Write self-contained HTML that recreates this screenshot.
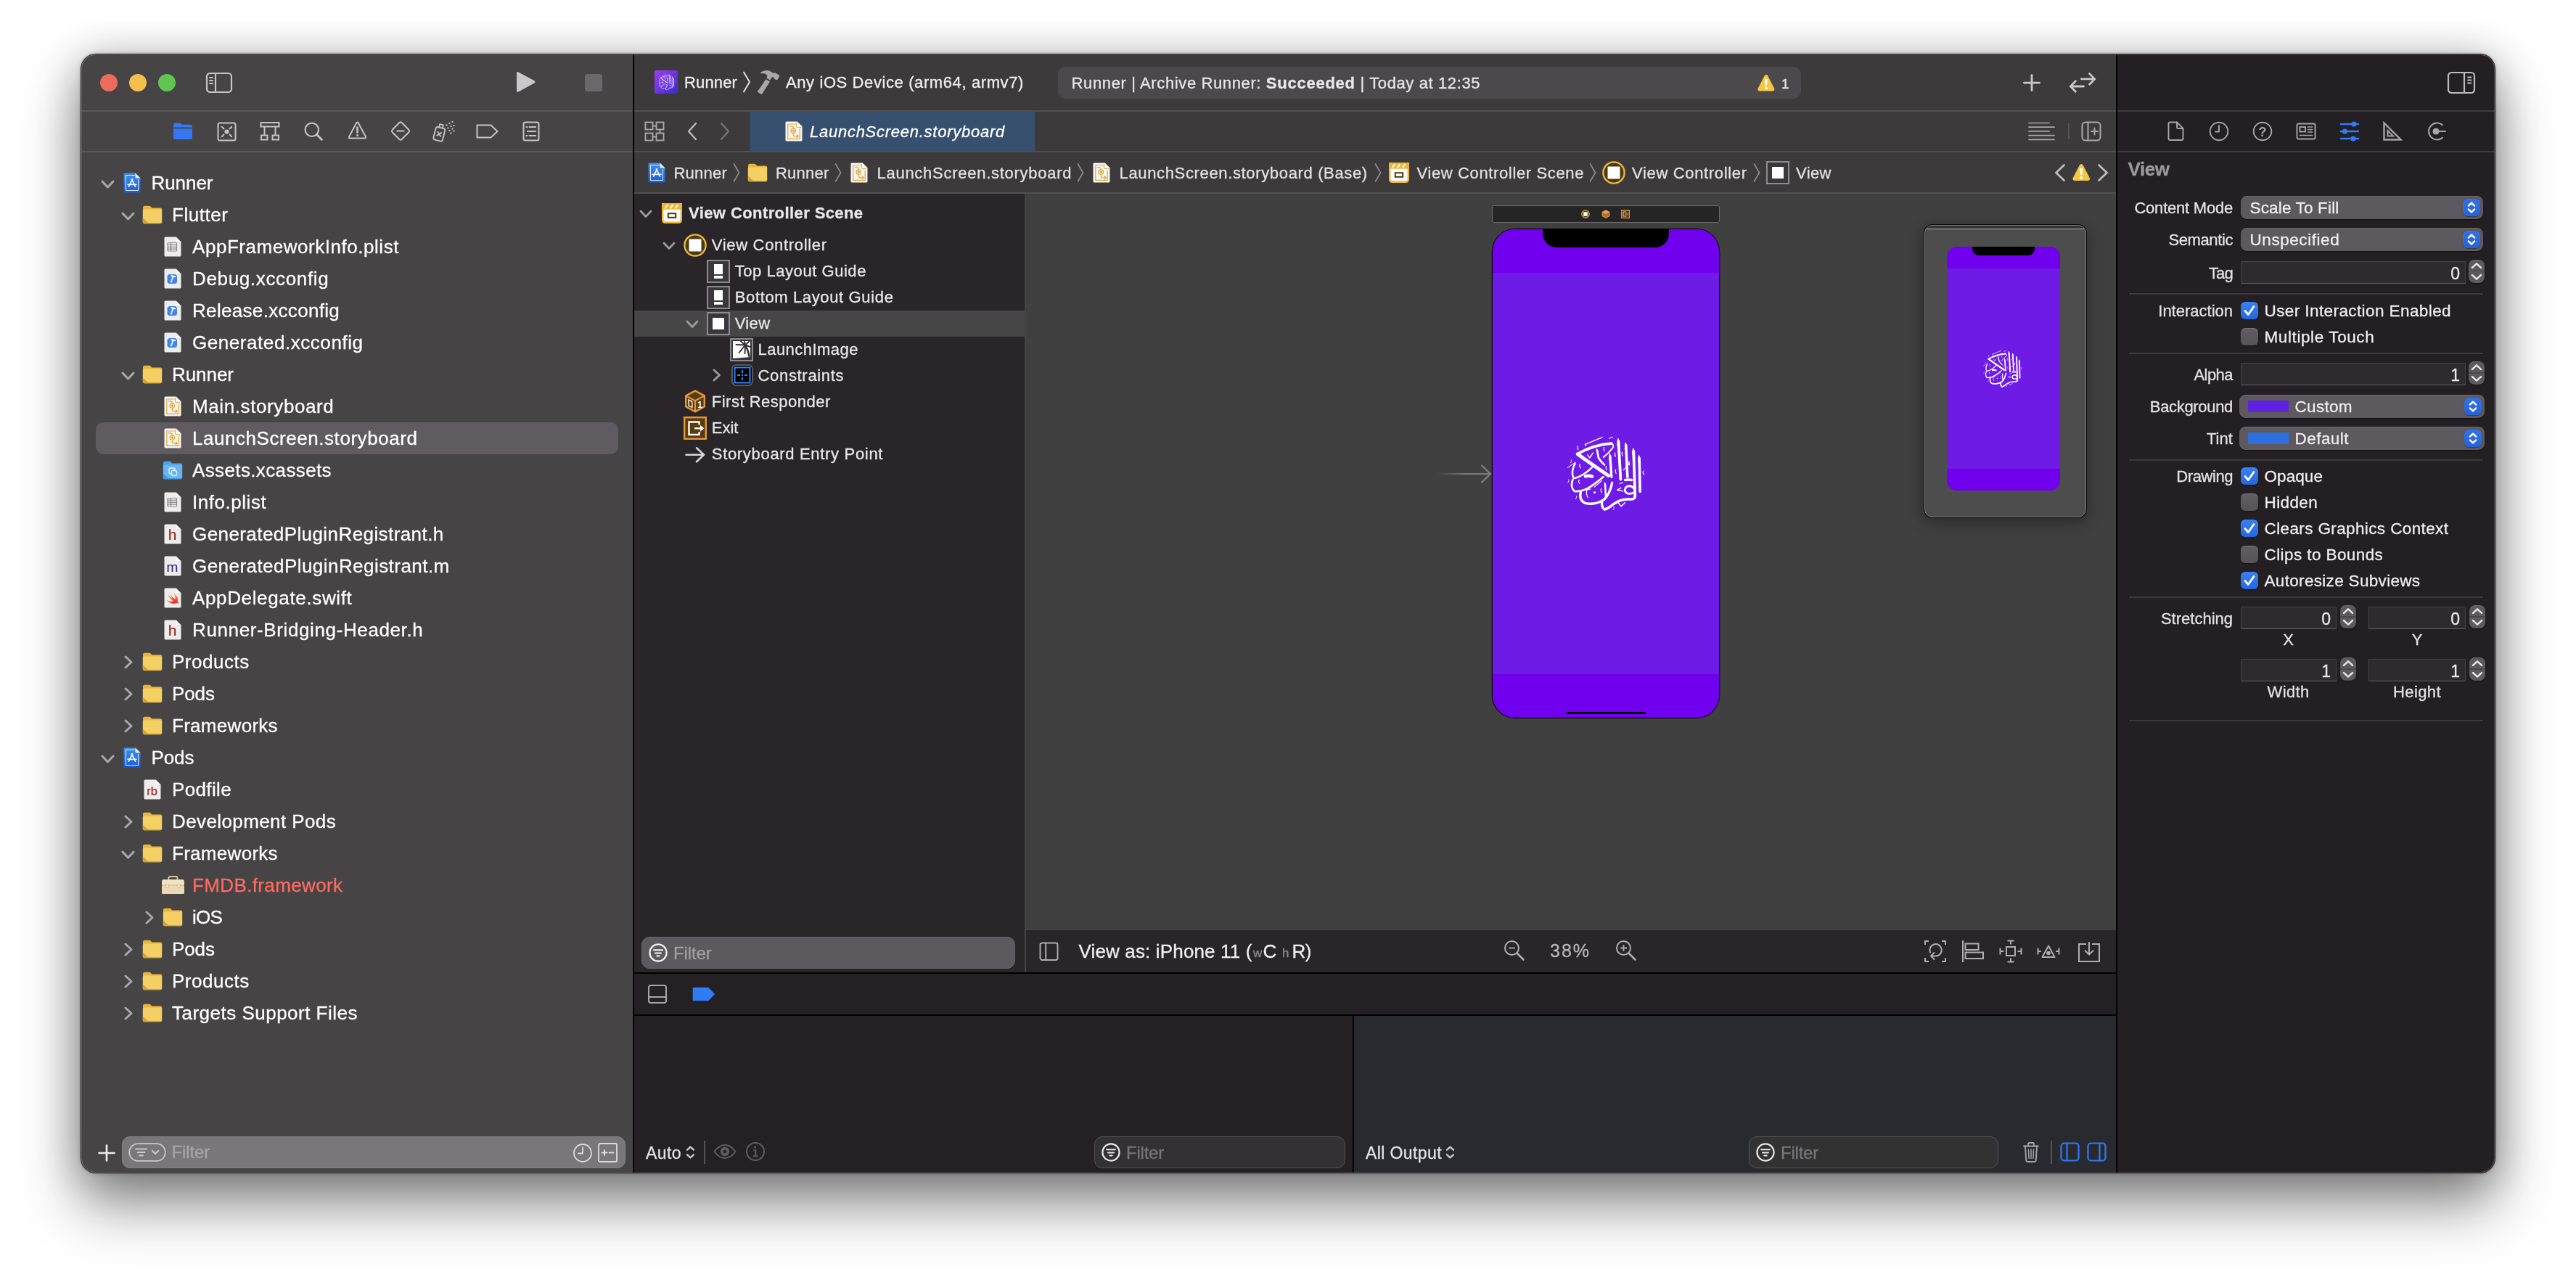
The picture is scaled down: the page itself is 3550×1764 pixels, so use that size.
<!DOCTYPE html><html><head><meta charset="utf-8"><title>Xcode</title><style>
html,body{margin:0;padding:0;}
body{width:3550px;height:1764px;background:#fff;overflow:hidden;position:relative;font-family:"Liberation Sans",sans-serif;}
div,svg{position:absolute;box-sizing:border-box;}
.t{white-space:nowrap;-webkit-text-stroke:0.3px currentColor;}
#shadow{left:112px;top:75px;width:3326px;height:1541px;border-radius:20px;
 box-shadow:0 0 0 1px rgba(0,0,0,.85),0 0 5px 1px rgba(0,0,0,.25),0 44px 80px 2px rgba(0,0,0,.44),0 4px 56px 4px rgba(0,0,0,.22);}
#clip{left:112px;top:75px;width:3326px;height:1541px;border-radius:20px;overflow:hidden;background:#3d3a3b;}
#rim{left:112px;top:75px;width:3326px;height:1541px;border-radius:20px;border:1.5px solid rgba(255,255,255,.2);}
#page{left:-112px;top:-75px;width:3550px;height:1764px;will-change:transform;}
</style></head><body><div id="shadow"></div><div id="clip"><div id="page"><div style="left:112px;top:75px;width:761px;height:1541px;background:#464444;"></div>
<div style="left:872px;top:75px;width:2px;height:1541px;background:#000;"></div>
<div style="left:871px;top:75px;width:1px;height:1541px;background:#4c4a4b;"></div>
<div style="left:874px;top:75px;width:2042px;height:192px;background:#3d3a3b;"></div>
<div style="left:2916px;top:75px;width:2px;height:1541px;background:#000;"></div>
<div style="left:2918px;top:75px;width:520px;height:1541px;background:#231f22;"></div>
<div style="left:112px;top:152px;width:760px;height:2px;background:#5a575a;"></div>
<div style="left:112px;top:208px;width:760px;height:2px;background:#5a575a;"></div>
<div style="left:874px;top:152px;width:2042px;height:2px;background:#524f52;"></div>
<div style="left:874px;top:208px;width:2042px;height:2px;background:#524f52;"></div>
<div style="left:874px;top:265px;width:2042px;height:2px;background:#524f52;"></div>
<div style="left:2918px;top:152px;width:520px;height:2px;background:#3f3c3f;"></div>
<div style="left:2918px;top:208px;width:520px;height:2px;background:#3f3c3f;"></div>
<svg style="left:138.5px;top:247.6px;" width="19" height="12" viewBox="0 0 19 12"><path d="M2 2 L9.5 10 L17 2" fill="none" stroke="#aaa8aa" stroke-width="3" stroke-linecap="round" stroke-linejoin="round"/></svg>
<svg style="left:170px;top:238px;" width="24" height="28" viewBox="0 0 24 28"><defs><linearGradient id="pg170238" x1="0" y1="0" x2="0" y2="1"><stop offset="0" stop-color="#3f93e3"/><stop offset="1" stop-color="#1c5bd8"/></linearGradient></defs><path d="M2 0.5 H16.5 L23.5 7.5 V26 Q23.5 27.5 22 27.5 H2 Q0.5 27.5 0.5 26 V2 Q0.5 0.5 2 0.5Z" fill="url(#pg170238)"/><path d="M16.5 0.5 L23.5 7.5 H18 Q16.5 7.5 16.5 6Z" fill="#e9f1fb"/><path d="M3.5 3.5 H16 M20.5 9 V24.5 H3.5 V3.5" fill="none" stroke="#dbe8fa" stroke-width="1"/><g fill="none" stroke="#eef4fd" stroke-width="1.7" stroke-linecap="round"><path d="M12.5 9 L7.5 19"/><path d="M11.5 9 L16.5 19"/><path d="M6 16.3 H18"/></g></svg>
<div class="t" style="left:208.5px;top:234.1px;font-size:26px;line-height:36px;color:#fff;letter-spacing:-0.06px;">Runner</div>
<svg style="left:166.5px;top:291.6px;" width="19" height="12" viewBox="0 0 19 12"><path d="M2 2 L9.5 10 L17 2" fill="none" stroke="#aaa8aa" stroke-width="3" stroke-linecap="round" stroke-linejoin="round"/></svg>
<svg style="left:196px;top:283px;" width="28" height="26" viewBox="0 0 28 26"><path d="M1 3 Q1 0.8 3.2 0.8 H9.5 Q11 0.8 12 2 L13.2 3.4 H25 Q27.2 3.4 27.2 5.6 V8 H1Z" fill="#e8b63d"/><path d="M0.8 7 Q0.8 5.4 2.6 5.4 H25.4 Q27.2 5.4 27.2 7 V23 Q27.2 25.2 25 25.2 H3 Q0.8 25.2 0.8 23Z" fill="#f4cf63"/><path d="M0.8 17.5 L8 24 H3 Q0.8 24 0.8 22Z" fill="#d3a235"/><path d="M0.8 23 Q0.8 25.2 3 25.2 H25 Q27.2 25.2 27.2 23 V22 Q27.2 24 25 24 H3 Q0.8 24 0.8 22Z" fill="#d3a235"/></svg>
<div class="t" style="left:237px;top:278.1px;font-size:26px;line-height:36px;color:#fff;letter-spacing:0.55px;">Flutter</div>
<svg style="left:226px;top:326px;" width="24" height="28" viewBox="0 0 24 28"><path d="M2 0.5 H16.5 L23.5 7.5 V26 Q23.5 27.5 22 27.5 H2 Q0.5 27.5 0.5 26 V2 Q0.5 0.5 2 0.5Z" fill="#eeeded"/><path d="M16.5 0.5 L23.5 7.5 H18 Q16.5 7.5 16.5 6Z" fill="#fbfbfb"/><path d="M16.5 7.5 H23.5 V9.5 Z" fill="#d4d2d4" opacity=".7"/><g fill="none" stroke="#8d8b8d" stroke-width="1.2"><rect x="5" y="8.5" width="12.5" height="11.5" rx="1"/><path d="M5 11.4 H17.5 M5 14.3 H17.5 M5 17.2 H17.5 M9.5 8.5 V20"/></g></svg>
<div class="t" style="left:265px;top:322.1px;font-size:26px;line-height:36px;color:#fff;letter-spacing:0.54px;">AppFrameworkInfo.plist</div>
<svg style="left:226px;top:370px;" width="24" height="28" viewBox="0 0 24 28"><path d="M2 0.5 H16.5 L23.5 7.5 V26 Q23.5 27.5 22 27.5 H2 Q0.5 27.5 0.5 26 V2 Q0.5 0.5 2 0.5Z" fill="#eeeded"/><path d="M16.5 0.5 L23.5 7.5 H18 Q16.5 7.5 16.5 6Z" fill="#fbfbfb"/><path d="M16.5 7.5 H23.5 V9.5 Z" fill="#d4d2d4" opacity=".7"/><rect x="4.5" y="8" width="13.5" height="13" rx="3.5" fill="#3d86f0"/><path d="M12.6 10.6 L10 18.6" stroke="#fff" stroke-width="1.7" stroke-linecap="round"/><path d="M10.6 10.2 L15 11.2" stroke="#fff" stroke-width="2.2" stroke-linecap="round"/></svg>
<div class="t" style="left:265px;top:366.1px;font-size:26px;line-height:36px;color:#fff;letter-spacing:0.65px;">Debug.xcconfig</div>
<svg style="left:226px;top:414px;" width="24" height="28" viewBox="0 0 24 28"><path d="M2 0.5 H16.5 L23.5 7.5 V26 Q23.5 27.5 22 27.5 H2 Q0.5 27.5 0.5 26 V2 Q0.5 0.5 2 0.5Z" fill="#eeeded"/><path d="M16.5 0.5 L23.5 7.5 H18 Q16.5 7.5 16.5 6Z" fill="#fbfbfb"/><path d="M16.5 7.5 H23.5 V9.5 Z" fill="#d4d2d4" opacity=".7"/><rect x="4.5" y="8" width="13.5" height="13" rx="3.5" fill="#3d86f0"/><path d="M12.6 10.6 L10 18.6" stroke="#fff" stroke-width="1.7" stroke-linecap="round"/><path d="M10.6 10.2 L15 11.2" stroke="#fff" stroke-width="2.2" stroke-linecap="round"/></svg>
<div class="t" style="left:265px;top:410.1px;font-size:26px;line-height:36px;color:#fff;letter-spacing:0.32px;">Release.xcconfig</div>
<svg style="left:226px;top:458px;" width="24" height="28" viewBox="0 0 24 28"><path d="M2 0.5 H16.5 L23.5 7.5 V26 Q23.5 27.5 22 27.5 H2 Q0.5 27.5 0.5 26 V2 Q0.5 0.5 2 0.5Z" fill="#eeeded"/><path d="M16.5 0.5 L23.5 7.5 H18 Q16.5 7.5 16.5 6Z" fill="#fbfbfb"/><path d="M16.5 7.5 H23.5 V9.5 Z" fill="#d4d2d4" opacity=".7"/><rect x="4.5" y="8" width="13.5" height="13" rx="3.5" fill="#3d86f0"/><path d="M12.6 10.6 L10 18.6" stroke="#fff" stroke-width="1.7" stroke-linecap="round"/><path d="M10.6 10.2 L15 11.2" stroke="#fff" stroke-width="2.2" stroke-linecap="round"/></svg>
<div class="t" style="left:265px;top:454.1px;font-size:26px;line-height:36px;color:#fff;letter-spacing:0.56px;">Generated.xcconfig</div>
<svg style="left:166.5px;top:511.6px;" width="19" height="12" viewBox="0 0 19 12"><path d="M2 2 L9.5 10 L17 2" fill="none" stroke="#aaa8aa" stroke-width="3" stroke-linecap="round" stroke-linejoin="round"/></svg>
<svg style="left:196px;top:503px;" width="28" height="26" viewBox="0 0 28 26"><path d="M1 3 Q1 0.8 3.2 0.8 H9.5 Q11 0.8 12 2 L13.2 3.4 H25 Q27.2 3.4 27.2 5.6 V8 H1Z" fill="#e8b63d"/><path d="M0.8 7 Q0.8 5.4 2.6 5.4 H25.4 Q27.2 5.4 27.2 7 V23 Q27.2 25.2 25 25.2 H3 Q0.8 25.2 0.8 23Z" fill="#f4cf63"/><path d="M0.8 17.5 L8 24 H3 Q0.8 24 0.8 22Z" fill="#d3a235"/><path d="M0.8 23 Q0.8 25.2 3 25.2 H25 Q27.2 25.2 27.2 23 V22 Q27.2 24 25 24 H3 Q0.8 24 0.8 22Z" fill="#d3a235"/></svg>
<div class="t" style="left:237px;top:498.1px;font-size:26px;line-height:36px;color:#fff;letter-spacing:-0.06px;">Runner</div>
<svg style="left:226px;top:546px;" width="24" height="28" viewBox="0 0 24 28"><path d="M2 0.5 H16.5 L23.5 7.5 V26 Q23.5 27.5 22 27.5 H2 Q0.5 27.5 0.5 26 V2 Q0.5 0.5 2 0.5Z" fill="#f6f5f3"/><path d="M16.5 0.5 L23.5 7.5 H18 Q16.5 7.5 16.5 6Z" fill="#fff" /><path d="M3.8 4 H14.5 M20.2 10.5 V24.3 H3.8 V4" fill="none" stroke="#e0a93b" stroke-width="1.2"/><path d="M15.4 2 V6.8 Q15.4 8.6 17.2 8.6 H22" fill="none" stroke="#e0a93b" stroke-width="1"/><g fill="none" stroke="#e0a93b" stroke-width="1.3" stroke-linecap="round"><circle cx="11.3" cy="13" r="3.2"/><circle cx="11.3" cy="13" r="1.1" fill="#e0a93b"/><path d="M6 6.8 H8.6 Q11.3 6.8 11.3 9.6"/><path d="M11.3 16.4 V18.3 Q11.3 20.8 13.8 20.8 H18 M16.2 18.8 L18.3 20.8 L16.2 22.8"/></g></svg>
<div class="t" style="left:265px;top:542.1px;font-size:26px;line-height:36px;color:#fff;letter-spacing:0.6px;">Main.storyboard</div>
<div style="left:132px;top:582.3px;width:720px;height:44px;background:#5f5b60;border-radius:11px;"></div>
<svg style="left:226px;top:590px;" width="24" height="28" viewBox="0 0 24 28"><path d="M2 0.5 H16.5 L23.5 7.5 V26 Q23.5 27.5 22 27.5 H2 Q0.5 27.5 0.5 26 V2 Q0.5 0.5 2 0.5Z" fill="#f6f5f3"/><path d="M16.5 0.5 L23.5 7.5 H18 Q16.5 7.5 16.5 6Z" fill="#fff" /><path d="M3.8 4 H14.5 M20.2 10.5 V24.3 H3.8 V4" fill="none" stroke="#e0a93b" stroke-width="1.2"/><path d="M15.4 2 V6.8 Q15.4 8.6 17.2 8.6 H22" fill="none" stroke="#e0a93b" stroke-width="1"/><g fill="none" stroke="#e0a93b" stroke-width="1.3" stroke-linecap="round"><circle cx="11.3" cy="13" r="3.2"/><circle cx="11.3" cy="13" r="1.1" fill="#e0a93b"/><path d="M6 6.8 H8.6 Q11.3 6.8 11.3 9.6"/><path d="M11.3 16.4 V18.3 Q11.3 20.8 13.8 20.8 H18 M16.2 18.8 L18.3 20.8 L16.2 22.8"/></g></svg>
<div class="t" style="left:265px;top:586.1px;font-size:26px;line-height:36px;color:#fff;letter-spacing:0.55px;">LaunchScreen.storyboard</div>
<svg style="left:224px;top:635px;" width="28" height="26" viewBox="0 0 28 26"><path d="M1 3 Q1 0.8 3.2 0.8 H9.5 Q11 0.8 12 2 L13.2 3.4 H25 Q27.2 3.4 27.2 5.6 V8 H1Z" fill="#4aa3ea"/><path d="M0.8 7 Q0.8 5.4 2.6 5.4 H25.4 Q27.2 5.4 27.2 7 V23 Q27.2 25.2 25 25.2 H3 Q0.8 25.2 0.8 23Z" fill="#66b6f1"/><path d="M0.8 17.5 L8 24 H3 Q0.8 24 0.8 22Z" fill="#3f96e2"/><path d="M0.8 23 Q0.8 25.2 3 25.2 H25 Q27.2 25.2 27.2 23 V22 Q27.2 24 25 24 H3 Q0.8 24 0.8 22Z" fill="#3f96e2"/><g fill="none" stroke="#e6f3fd" stroke-width="1.3"><rect x="9" y="10" width="8" height="8" rx="1.5"/><rect x="12.5" y="13.5" width="7" height="7" rx="1.5" fill="#5fb4f0"/></g></svg>
<div class="t" style="left:265px;top:630.1px;font-size:26px;line-height:36px;color:#fff;letter-spacing:0.37px;">Assets.xcassets</div>
<svg style="left:226px;top:678px;" width="24" height="28" viewBox="0 0 24 28"><path d="M2 0.5 H16.5 L23.5 7.5 V26 Q23.5 27.5 22 27.5 H2 Q0.5 27.5 0.5 26 V2 Q0.5 0.5 2 0.5Z" fill="#eeeded"/><path d="M16.5 0.5 L23.5 7.5 H18 Q16.5 7.5 16.5 6Z" fill="#fbfbfb"/><path d="M16.5 7.5 H23.5 V9.5 Z" fill="#d4d2d4" opacity=".7"/><g fill="none" stroke="#8d8b8d" stroke-width="1.2"><rect x="5" y="8.5" width="12.5" height="11.5" rx="1"/><path d="M5 11.4 H17.5 M5 14.3 H17.5 M5 17.2 H17.5 M9.5 8.5 V20"/></g></svg>
<div class="t" style="left:265px;top:674.1px;font-size:26px;line-height:36px;color:#fff;letter-spacing:0.54px;">Info.plist</div>
<svg style="left:226px;top:722px;" width="24" height="28" viewBox="0 0 24 28"><path d="M2 0.5 H16.5 L23.5 7.5 V26 Q23.5 27.5 22 27.5 H2 Q0.5 27.5 0.5 26 V2 Q0.5 0.5 2 0.5Z" fill="#eeeded"/><path d="M16.5 0.5 L23.5 7.5 H18 Q16.5 7.5 16.5 6Z" fill="#fbfbfb"/><path d="M16.5 7.5 H23.5 V9.5 Z" fill="#d4d2d4" opacity=".7"/><text x="11.5" y="21.5" font-family="Liberation Sans, sans-serif" font-size="21" fill="#a3241f" stroke="#a3241f" stroke-width=".15" text-anchor="middle">h</text></svg>
<div class="t" style="left:265px;top:718.1px;font-size:26px;line-height:36px;color:#fff;letter-spacing:0.42px;">GeneratedPluginRegistrant.h</div>
<svg style="left:226px;top:766px;" width="24" height="28" viewBox="0 0 24 28"><path d="M2 0.5 H16.5 L23.5 7.5 V26 Q23.5 27.5 22 27.5 H2 Q0.5 27.5 0.5 26 V2 Q0.5 0.5 2 0.5Z" fill="#eeeded"/><path d="M16.5 0.5 L23.5 7.5 H18 Q16.5 7.5 16.5 6Z" fill="#fbfbfb"/><path d="M16.5 7.5 H23.5 V9.5 Z" fill="#d4d2d4" opacity=".7"/><text x="11.5" y="21.5" font-family="Liberation Sans, sans-serif" font-size="19" fill="#4a2a8e" stroke="#4a2a8e" stroke-width=".15" text-anchor="middle">m</text></svg>
<div class="t" style="left:265px;top:762.1px;font-size:26px;line-height:36px;color:#fff;letter-spacing:0.45px;">GeneratedPluginRegistrant.m</div>
<svg style="left:226px;top:810px;" width="24" height="28" viewBox="0 0 24 28"><path d="M2 0.5 H16.5 L23.5 7.5 V26 Q23.5 27.5 22 27.5 H2 Q0.5 27.5 0.5 26 V2 Q0.5 0.5 2 0.5Z" fill="#eeeded"/><path d="M16.5 0.5 L23.5 7.5 H18 Q16.5 7.5 16.5 6Z" fill="#fbfbfb"/><path d="M16.5 7.5 H23.5 V9.5 Z" fill="#d4d2d4" opacity=".7"/><defs><linearGradient id="sw810" x1="0" y1="0" x2="0" y2="1"><stop offset="0" stop-color="#f88a36"/><stop offset="1" stop-color="#fd2020"/></linearGradient></defs><path d="M13.5 9 C17.5 12 18.6 15.5 17.6 18 C18.6 19.2 18.7 20.6 18.5 21.4 C17.6 19.9 16.4 19.9 15.7 20.3 C13.5 21.5 9 21.2 5 16.6 C7.5 18.3 10.3 18.9 12.4 17.7 C9.5 15.4 7.3 12.5 6 10.5 C8.3 12.5 11 14.5 12.2 15.2 C10.4 13.3 8.8 11.2 8 10 C10.6 12.4 13.6 14.8 15 15.6 C15.6 13.6 14.9 11 13.5 9Z" fill="url(#sw810)" transform="translate(11.8 15.2) scale(1.18) translate(-11.8 -15.2)"/></svg>
<div class="t" style="left:265px;top:806.1px;font-size:26px;line-height:36px;color:#fff;letter-spacing:0.64px;">AppDelegate.swift</div>
<svg style="left:226px;top:854px;" width="24" height="28" viewBox="0 0 24 28"><path d="M2 0.5 H16.5 L23.5 7.5 V26 Q23.5 27.5 22 27.5 H2 Q0.5 27.5 0.5 26 V2 Q0.5 0.5 2 0.5Z" fill="#eeeded"/><path d="M16.5 0.5 L23.5 7.5 H18 Q16.5 7.5 16.5 6Z" fill="#fbfbfb"/><path d="M16.5 7.5 H23.5 V9.5 Z" fill="#d4d2d4" opacity=".7"/><text x="11.5" y="21.5" font-family="Liberation Sans, sans-serif" font-size="21" fill="#a3241f" stroke="#a3241f" stroke-width=".15" text-anchor="middle">h</text></svg>
<div class="t" style="left:265px;top:850.1px;font-size:26px;line-height:36px;color:#fff;letter-spacing:0.62px;">Runner-Bridging-Header.h</div>
<svg style="left:171.0px;top:903.1px;" width="12" height="19" viewBox="0 0 12 19"><path d="M2 2 L10 9.5 L2 17" fill="none" stroke="#aaa8aa" stroke-width="3" stroke-linecap="round" stroke-linejoin="round"/></svg>
<svg style="left:196px;top:899px;" width="28" height="26" viewBox="0 0 28 26"><path d="M1 3 Q1 0.8 3.2 0.8 H9.5 Q11 0.8 12 2 L13.2 3.4 H25 Q27.2 3.4 27.2 5.6 V8 H1Z" fill="#e8b63d"/><path d="M0.8 7 Q0.8 5.4 2.6 5.4 H25.4 Q27.2 5.4 27.2 7 V23 Q27.2 25.2 25 25.2 H3 Q0.8 25.2 0.8 23Z" fill="#f4cf63"/><path d="M0.8 17.5 L8 24 H3 Q0.8 24 0.8 22Z" fill="#d3a235"/><path d="M0.8 23 Q0.8 25.2 3 25.2 H25 Q27.2 25.2 27.2 23 V22 Q27.2 24 25 24 H3 Q0.8 24 0.8 22Z" fill="#d3a235"/></svg>
<div class="t" style="left:237px;top:894.1px;font-size:26px;line-height:36px;color:#fff;letter-spacing:0.52px;">Products</div>
<svg style="left:171.0px;top:947.1px;" width="12" height="19" viewBox="0 0 12 19"><path d="M2 2 L10 9.5 L2 17" fill="none" stroke="#aaa8aa" stroke-width="3" stroke-linecap="round" stroke-linejoin="round"/></svg>
<svg style="left:196px;top:943px;" width="28" height="26" viewBox="0 0 28 26"><path d="M1 3 Q1 0.8 3.2 0.8 H9.5 Q11 0.8 12 2 L13.2 3.4 H25 Q27.2 3.4 27.2 5.6 V8 H1Z" fill="#e8b63d"/><path d="M0.8 7 Q0.8 5.4 2.6 5.4 H25.4 Q27.2 5.4 27.2 7 V23 Q27.2 25.2 25 25.2 H3 Q0.8 25.2 0.8 23Z" fill="#f4cf63"/><path d="M0.8 17.5 L8 24 H3 Q0.8 24 0.8 22Z" fill="#d3a235"/><path d="M0.8 23 Q0.8 25.2 3 25.2 H25 Q27.2 25.2 27.2 23 V22 Q27.2 24 25 24 H3 Q0.8 24 0.8 22Z" fill="#d3a235"/></svg>
<div class="t" style="left:237px;top:938.1px;font-size:26px;line-height:36px;color:#fff;letter-spacing:-0.11px;">Pods</div>
<svg style="left:171.0px;top:991.1px;" width="12" height="19" viewBox="0 0 12 19"><path d="M2 2 L10 9.5 L2 17" fill="none" stroke="#aaa8aa" stroke-width="3" stroke-linecap="round" stroke-linejoin="round"/></svg>
<svg style="left:196px;top:987px;" width="28" height="26" viewBox="0 0 28 26"><path d="M1 3 Q1 0.8 3.2 0.8 H9.5 Q11 0.8 12 2 L13.2 3.4 H25 Q27.2 3.4 27.2 5.6 V8 H1Z" fill="#e8b63d"/><path d="M0.8 7 Q0.8 5.4 2.6 5.4 H25.4 Q27.2 5.4 27.2 7 V23 Q27.2 25.2 25 25.2 H3 Q0.8 25.2 0.8 23Z" fill="#f4cf63"/><path d="M0.8 17.5 L8 24 H3 Q0.8 24 0.8 22Z" fill="#d3a235"/><path d="M0.8 23 Q0.8 25.2 3 25.2 H25 Q27.2 25.2 27.2 23 V22 Q27.2 24 25 24 H3 Q0.8 24 0.8 22Z" fill="#d3a235"/></svg>
<div class="t" style="left:237px;top:982.1px;font-size:26px;line-height:36px;color:#fff;letter-spacing:0.29px;">Frameworks</div>
<svg style="left:138.5px;top:1039.6px;" width="19" height="12" viewBox="0 0 19 12"><path d="M2 2 L9.5 10 L17 2" fill="none" stroke="#aaa8aa" stroke-width="3" stroke-linecap="round" stroke-linejoin="round"/></svg>
<svg style="left:170px;top:1030px;" width="24" height="28" viewBox="0 0 24 28"><defs><linearGradient id="pg171030" x1="0" y1="0" x2="0" y2="1"><stop offset="0" stop-color="#3f93e3"/><stop offset="1" stop-color="#1c5bd8"/></linearGradient></defs><path d="M2 0.5 H16.5 L23.5 7.5 V26 Q23.5 27.5 22 27.5 H2 Q0.5 27.5 0.5 26 V2 Q0.5 0.5 2 0.5Z" fill="url(#pg171030)"/><path d="M16.5 0.5 L23.5 7.5 H18 Q16.5 7.5 16.5 6Z" fill="#e9f1fb"/><path d="M3.5 3.5 H16 M20.5 9 V24.5 H3.5 V3.5" fill="none" stroke="#dbe8fa" stroke-width="1"/><g fill="none" stroke="#eef4fd" stroke-width="1.7" stroke-linecap="round"><path d="M12.5 9 L7.5 19"/><path d="M11.5 9 L16.5 19"/><path d="M6 16.3 H18"/></g></svg>
<div class="t" style="left:208.5px;top:1026.1px;font-size:26px;line-height:36px;color:#fff;letter-spacing:-0.11px;">Pods</div>
<svg style="left:198px;top:1074px;" width="24" height="28" viewBox="0 0 24 28"><path d="M2 0.5 H16.5 L23.5 7.5 V26 Q23.5 27.5 22 27.5 H2 Q0.5 27.5 0.5 26 V2 Q0.5 0.5 2 0.5Z" fill="#eeeded"/><path d="M16.5 0.5 L23.5 7.5 H18 Q16.5 7.5 16.5 6Z" fill="#fbfbfb"/><path d="M16.5 7.5 H23.5 V9.5 Z" fill="#d4d2d4" opacity=".7"/><text x="11.5" y="21.5" font-family="Liberation Sans, sans-serif" font-size="16.5" fill="#a3241f" stroke="#a3241f" stroke-width=".15" text-anchor="middle">rb</text></svg>
<div class="t" style="left:237px;top:1070.1px;font-size:26px;line-height:36px;color:#fff;letter-spacing:0.35px;">Podfile</div>
<svg style="left:171.0px;top:1123.1px;" width="12" height="19" viewBox="0 0 12 19"><path d="M2 2 L10 9.5 L2 17" fill="none" stroke="#aaa8aa" stroke-width="3" stroke-linecap="round" stroke-linejoin="round"/></svg>
<svg style="left:196px;top:1119px;" width="28" height="26" viewBox="0 0 28 26"><path d="M1 3 Q1 0.8 3.2 0.8 H9.5 Q11 0.8 12 2 L13.2 3.4 H25 Q27.2 3.4 27.2 5.6 V8 H1Z" fill="#e8b63d"/><path d="M0.8 7 Q0.8 5.4 2.6 5.4 H25.4 Q27.2 5.4 27.2 7 V23 Q27.2 25.2 25 25.2 H3 Q0.8 25.2 0.8 23Z" fill="#f4cf63"/><path d="M0.8 17.5 L8 24 H3 Q0.8 24 0.8 22Z" fill="#d3a235"/><path d="M0.8 23 Q0.8 25.2 3 25.2 H25 Q27.2 25.2 27.2 23 V22 Q27.2 24 25 24 H3 Q0.8 24 0.8 22Z" fill="#d3a235"/></svg>
<div class="t" style="left:237px;top:1114.1px;font-size:26px;line-height:36px;color:#fff;letter-spacing:0.4px;">Development Pods</div>
<svg style="left:166.5px;top:1171.6px;" width="19" height="12" viewBox="0 0 19 12"><path d="M2 2 L9.5 10 L17 2" fill="none" stroke="#aaa8aa" stroke-width="3" stroke-linecap="round" stroke-linejoin="round"/></svg>
<svg style="left:196px;top:1163px;" width="28" height="26" viewBox="0 0 28 26"><path d="M1 3 Q1 0.8 3.2 0.8 H9.5 Q11 0.8 12 2 L13.2 3.4 H25 Q27.2 3.4 27.2 5.6 V8 H1Z" fill="#e8b63d"/><path d="M0.8 7 Q0.8 5.4 2.6 5.4 H25.4 Q27.2 5.4 27.2 7 V23 Q27.2 25.2 25 25.2 H3 Q0.8 25.2 0.8 23Z" fill="#f4cf63"/><path d="M0.8 17.5 L8 24 H3 Q0.8 24 0.8 22Z" fill="#d3a235"/><path d="M0.8 23 Q0.8 25.2 3 25.2 H25 Q27.2 25.2 27.2 23 V22 Q27.2 24 25 24 H3 Q0.8 24 0.8 22Z" fill="#d3a235"/></svg>
<div class="t" style="left:237px;top:1158.1px;font-size:26px;line-height:36px;color:#fff;letter-spacing:0.29px;">Frameworks</div>
<svg style="left:222px;top:1207px;" width="33" height="26" viewBox="0 0 33 26"><path d="M10.5 5 V3.2 Q10.5 1 12.7 1 H20.3 Q22.5 1 22.5 3.2 V5" fill="none" stroke="#d9c9a4" stroke-width="1.8"/><path d="M1 8 Q1 5 4 5 H29 Q32 5 32 8 V13 H1Z" fill="#f0e2c2"/><rect x="1" y="13" width="31" height="12" rx="1.5" fill="#ead9b3"/><path d="M1 13 H32" stroke="#c9b78f" stroke-width="1"/><rect x="7" y="11.5" width="3" height="4.5" rx="1" fill="#fff8e6" stroke="#bda97d" stroke-width=".7"/><rect x="23" y="11.5" width="3" height="4.5" rx="1" fill="#fff8e6" stroke="#bda97d" stroke-width=".7"/></svg>
<div class="t" style="left:265px;top:1202.1px;font-size:26px;line-height:36px;color:#ff6a63;letter-spacing:0.37px;">FMDB.framework</div>
<svg style="left:200.0px;top:1255.1px;" width="12" height="19" viewBox="0 0 12 19"><path d="M2 2 L10 9.5 L2 17" fill="none" stroke="#aaa8aa" stroke-width="3" stroke-linecap="round" stroke-linejoin="round"/></svg>
<svg style="left:224px;top:1251px;" width="28" height="26" viewBox="0 0 28 26"><path d="M1 3 Q1 0.8 3.2 0.8 H9.5 Q11 0.8 12 2 L13.2 3.4 H25 Q27.2 3.4 27.2 5.6 V8 H1Z" fill="#e8b63d"/><path d="M0.8 7 Q0.8 5.4 2.6 5.4 H25.4 Q27.2 5.4 27.2 7 V23 Q27.2 25.2 25 25.2 H3 Q0.8 25.2 0.8 23Z" fill="#f4cf63"/><path d="M0.8 17.5 L8 24 H3 Q0.8 24 0.8 22Z" fill="#d3a235"/><path d="M0.8 23 Q0.8 25.2 3 25.2 H25 Q27.2 25.2 27.2 23 V22 Q27.2 24 25 24 H3 Q0.8 24 0.8 22Z" fill="#d3a235"/></svg>
<div class="t" style="left:265px;top:1246.1px;font-size:26px;line-height:36px;color:#fff;letter-spacing:-0.75px;">iOS</div>
<svg style="left:171.0px;top:1299.1px;" width="12" height="19" viewBox="0 0 12 19"><path d="M2 2 L10 9.5 L2 17" fill="none" stroke="#aaa8aa" stroke-width="3" stroke-linecap="round" stroke-linejoin="round"/></svg>
<svg style="left:196px;top:1295px;" width="28" height="26" viewBox="0 0 28 26"><path d="M1 3 Q1 0.8 3.2 0.8 H9.5 Q11 0.8 12 2 L13.2 3.4 H25 Q27.2 3.4 27.2 5.6 V8 H1Z" fill="#e8b63d"/><path d="M0.8 7 Q0.8 5.4 2.6 5.4 H25.4 Q27.2 5.4 27.2 7 V23 Q27.2 25.2 25 25.2 H3 Q0.8 25.2 0.8 23Z" fill="#f4cf63"/><path d="M0.8 17.5 L8 24 H3 Q0.8 24 0.8 22Z" fill="#d3a235"/><path d="M0.8 23 Q0.8 25.2 3 25.2 H25 Q27.2 25.2 27.2 23 V22 Q27.2 24 25 24 H3 Q0.8 24 0.8 22Z" fill="#d3a235"/></svg>
<div class="t" style="left:237px;top:1290.1px;font-size:26px;line-height:36px;color:#fff;letter-spacing:-0.11px;">Pods</div>
<svg style="left:171.0px;top:1343.1px;" width="12" height="19" viewBox="0 0 12 19"><path d="M2 2 L10 9.5 L2 17" fill="none" stroke="#aaa8aa" stroke-width="3" stroke-linecap="round" stroke-linejoin="round"/></svg>
<svg style="left:196px;top:1339px;" width="28" height="26" viewBox="0 0 28 26"><path d="M1 3 Q1 0.8 3.2 0.8 H9.5 Q11 0.8 12 2 L13.2 3.4 H25 Q27.2 3.4 27.2 5.6 V8 H1Z" fill="#e8b63d"/><path d="M0.8 7 Q0.8 5.4 2.6 5.4 H25.4 Q27.2 5.4 27.2 7 V23 Q27.2 25.2 25 25.2 H3 Q0.8 25.2 0.8 23Z" fill="#f4cf63"/><path d="M0.8 17.5 L8 24 H3 Q0.8 24 0.8 22Z" fill="#d3a235"/><path d="M0.8 23 Q0.8 25.2 3 25.2 H25 Q27.2 25.2 27.2 23 V22 Q27.2 24 25 24 H3 Q0.8 24 0.8 22Z" fill="#d3a235"/></svg>
<div class="t" style="left:237px;top:1334.1px;font-size:26px;line-height:36px;color:#fff;letter-spacing:0.52px;">Products</div>
<svg style="left:171.0px;top:1387.1px;" width="12" height="19" viewBox="0 0 12 19"><path d="M2 2 L10 9.5 L2 17" fill="none" stroke="#aaa8aa" stroke-width="3" stroke-linecap="round" stroke-linejoin="round"/></svg>
<svg style="left:196px;top:1383px;" width="28" height="26" viewBox="0 0 28 26"><path d="M1 3 Q1 0.8 3.2 0.8 H9.5 Q11 0.8 12 2 L13.2 3.4 H25 Q27.2 3.4 27.2 5.6 V8 H1Z" fill="#e8b63d"/><path d="M0.8 7 Q0.8 5.4 2.6 5.4 H25.4 Q27.2 5.4 27.2 7 V23 Q27.2 25.2 25 25.2 H3 Q0.8 25.2 0.8 23Z" fill="#f4cf63"/><path d="M0.8 17.5 L8 24 H3 Q0.8 24 0.8 22Z" fill="#d3a235"/><path d="M0.8 23 Q0.8 25.2 3 25.2 H25 Q27.2 25.2 27.2 23 V22 Q27.2 24 25 24 H3 Q0.8 24 0.8 22Z" fill="#d3a235"/></svg>
<div class="t" style="left:237px;top:1378.1px;font-size:26px;line-height:36px;color:#fff;letter-spacing:0.49px;">Targets Support Files</div>
<svg style="left:134px;top:1576px;" width="26" height="26" viewBox="0 0 26 26"><path d="M13 2.5 V23.5 M2.5 13 H23.5" stroke="#eceaec" stroke-width="2.7" stroke-linecap="round"/></svg>
<div style="left:168px;top:1566px;width:694px;height:44px;background:#7a777a;border-radius:11px;border:1px solid #838083;"></div>
<svg style="left:177px;top:1575px;" width="52" height="26" viewBox="0 0 52 26"><rect x="1.2" y="1.2" width="49.6" height="23.6" rx="11.8" fill="none" stroke="#c9c7c9" stroke-width="1.8"/><path d="M10 8.5 H25 M12.5 13 H22.5 M15 17.5 H20" stroke="#c9c7c9" stroke-width="1.8" stroke-linecap="round"/><path d="M33 11 L37 15 L41 11" fill="none" stroke="#c9c7c9" stroke-width="2.2" stroke-linecap="round" stroke-linejoin="round"/></svg>
<div class="t" style="left:236.5px;top:1571.0px;font-size:24px;line-height:33px;color:#a8a5a8;letter-spacing:-0.14px;">Filter</div>
<svg style="left:789px;top:1575px;" width="28" height="28" viewBox="0 0 28 28"><circle cx="14" cy="14" r="12" fill="none" stroke="#dddbdd" stroke-width="1.8"/><path d="M14 6.5 V14.5 H8" fill="none" stroke="#dddbdd" stroke-width="1.8" stroke-linecap="round" stroke-linejoin="round"/></svg>
<svg style="left:824px;top:1575px;" width="28" height="28" viewBox="0 0 28 28"><rect x="1" y="1" width="25" height="25" rx="2" fill="none" stroke="#dddbdd" stroke-width="1.8"/><path d="M5.5 13.5 H12.5 M9 10 V17 M15.5 13.5 H21.5" stroke="#dddbdd" stroke-width="1.9" stroke-linecap="round"/></svg>
<div style="left:138px;top:102px;width:24px;height:24px;border-radius:12px;background:#ed6a5e;"></div>
<div style="left:178px;top:102px;width:24px;height:24px;border-radius:12px;background:#f5bf4f;"></div>
<div style="left:218px;top:102px;width:24px;height:24px;border-radius:12px;background:#61c554;"></div>
<svg style="left:283px;top:99px;" width="38" height="30" viewBox="0 0 38 30"><g fill="none" stroke="#c6c4c6" stroke-width="2.2" stroke-linecap="round" stroke-linejoin="round" ><rect x="2" y="2" width="34" height="26" rx="4.5"/><path d="M14 2 V28"/><path d="M6 8 H10 M6 12 H10 M6 16 H10" stroke-width="1.8"/></g></svg>
<svg style="left:710px;top:97px;" width="30" height="32" viewBox="0 0 30 32"><path d="M2 4 Q2 1.2 4.6 2.4 L26.4 14.2 Q28.6 16 26.4 17.6 L4.6 29.4 Q2 30.6 2 27.8Z" fill="#cac8ca"/></svg>
<div style="left:806px;top:102px;width:24px;height:24px;background:#6b696b;border-radius:3.5px;"></div>
<svg style="left:238px;top:168px;" width="28" height="25" viewBox="0 0 28 25"><path d="M1 4 Q1 1.5 3.5 1.5 H9 Q10.5 1.5 11.5 2.6 L12.6 3.8 H24.5 Q27 3.8 27 6.3 V7.5 H1Z" fill="#3478f6"/><path d="M1 9.3 H27 V21.5 Q27 24 24.5 24 H3.5 Q1 24 1 21.5Z" fill="#3478f6"/></svg>
<svg style="left:298.5px;top:167.5px;" width="27" height="27" viewBox="0 0 27 27"><g fill="none" stroke="#c6c4c6" stroke-width="2" stroke-linecap="round" stroke-linejoin="round" ><rect x="1.5" y="1.5" width="24" height="24" rx="2.5" transform="scale(1)"/><path d="M6.8 6.8 L9.5 9.5 M20.2 6.8 L17.5 9.5 M6.8 20.2 L9.5 17.5 M20.2 20.2 L17.5 17.5"/><circle cx="13.5" cy="13.5" r="3.1" fill="#c6c4c6" stroke="none"/></g></svg>
<svg style="left:358px;top:167px;" width="28" height="28" viewBox="0 0 28 28"><g fill="none" stroke="#c6c4c6" stroke-width="2" stroke-linecap="round"  stroke-linejoin="miter"><rect x="1.5" y="2" width="25" height="5.5" /><path d="M6.5 7.5 V19 M21.5 7.5 V19"/><rect x="2" y="19.5" width="8.5" height="6"/><rect x="17.5" y="19.5" width="8.5" height="6"/></g></svg>
<svg style="left:418px;top:167px;" width="30" height="30" viewBox="0 0 30 30"><g fill="none" stroke="#c6c4c6" stroke-width="2.2" stroke-linecap="round" stroke-linejoin="round" ><circle cx="11.8" cy="11.8" r="9.2"/><path d="M18.6 18.6 L25.5 25.5" stroke-width="2.8"/></g></svg>
<svg style="left:479px;top:166px;" width="27" height="28" viewBox="0 0 27 28"><g fill="none" stroke="#c6c4c6" stroke-width="2" stroke-linecap="round" stroke-linejoin="round" ><path d="M13.5 2.6 Q14.3 2.6 14.8 3.5 L25 22.5 Q25.6 24.6 23.6 24.6 H3.4 Q1.4 24.6 2 22.5 L12.2 3.5 Q12.7 2.6 13.5 2.6Z"/><path d="M13.5 9.5 V16.5" stroke-width="2.6"/><circle cx="13.5" cy="20.4" r="1.5" fill="#c6c4c6" stroke="none"/></g></svg>
<svg style="left:538px;top:166px;" width="28" height="30" viewBox="0 0 28 30"><g fill="none" stroke="#c6c4c6" stroke-width="2" stroke-linecap="round" stroke-linejoin="round" ><path d="M14 2.2 Q14.8 2.2 15.6 3 L25.3 12.8 Q26.6 14.5 25.3 16.2 L15.6 26 Q14 27.4 12.4 26 L2.7 16.2 Q1.4 14.5 2.7 12.8 L12.4 3 Q13.2 2.2 14 2.2Z"/><path d="M9.5 14.5 H18.5" stroke-width="2.2"/></g></svg>
<svg style="left:596px;top:166px;" width="33" height="31" viewBox="0 0 33 31"><g fill="none" stroke="#c6c4c6" stroke-width="1.9" stroke-linejoin="round" stroke-linecap="round" transform="rotate(14 10 18)"><rect x="3" y="10" width="13" height="18" rx="2.5"/><path d="M7 10 V5.5 H12 V10"/><path d="M7 16.5 L12 21.5 M12 16.5 L7 21.5"/></g><g fill="#c6c4c6"><rect x="18.5" y="5.5" width="2" height="2"/><rect x="22.5" y="3" width="2" height="2"/><rect x="26.5" y="1" width="2" height="2"/><rect x="24.5" y="7" width="2" height="2"/><rect x="28.5" y="6" width="2" height="2"/><rect x="20.5" y="9.5" width="2" height="2"/><rect x="26.5" y="10.5" width="2" height="2"/><rect x="22.5" y="13" width="2" height="2"/><rect x="28.5" y="13.5" width="2" height="2"/><rect x="24.5" y="16.5" width="2" height="2"/></g></svg>
<svg style="left:656px;top:171px;" width="32" height="20" viewBox="0 0 32 20"><g fill="none" stroke="#c6c4c6" stroke-width="2" stroke-linecap="round"  stroke-linejoin="miter"><path d="M1.5 1.5 H20.5 L29.5 10 L20.5 18.5 H1.5Z"/></g></svg>
<svg style="left:720px;top:167px;" width="24" height="28" viewBox="0 0 24 28"><g fill="none" stroke="#c6c4c6" stroke-width="2" stroke-linecap="round" stroke-linejoin="round" ><rect x="1.5" y="1.5" width="21" height="25" rx="2.5"/><path d="M9.5 8 H18 M9.5 14 H18 M9.5 20 H18" stroke-width="2.2"/><path d="M5.5 8 H6.5 M7 14 H8 M5.5 20 H6.5" stroke-width="2.2"/></g></svg>
<svg style="left:902px;top:97px;" width="32" height="32" viewBox="0 0 32 32"><defs><linearGradient id="ai902_97" x1="0" y1="0" x2="1" y2="1"><stop offset="0" stop-color="#9d3fec"/><stop offset="1" stop-color="#3a2bd0"/></linearGradient></defs><rect width="32" height="32" rx="2" fill="url(#ai902_97)"/></svg><svg style="left:905.5px;top:101.0px;" width="25" height="24.1" viewBox="0 0 1326 1280"><g fill="none" stroke="#efe4fc" stroke-linecap="round" stroke-linejoin="round"><path d="M338 188 L608 76" stroke-width="15.4"/><path d="M338 188 L350 210" stroke-width="15.4"/><path d="M720 92 Q750 70 770 78" stroke-width="15.4"/><path d="M218 338 Q470 190 752 172" stroke-width="43.5"/><path d="M752 172 Q800 196 770 245 Q700 335 626 390" stroke-width="21.8"/><path d="M218 340 Q440 500 705 680" stroke-width="53.8"/><path d="M526 280 L548 400 Q590 470 640 508" stroke-width="30.7"/><path d="M518 258 L536 330" stroke-width="15.4"/><path d="M62 552 L188 468" stroke-width="11.5"/><path d="M176 492 Q108 620 156 724 Q300 700 470 528" stroke-width="28.2"/><path d="M140 746 Q100 860 166 924 Q300 940 440 842 Q545 770 622 700" stroke-width="30.7"/><path d="M268 936 Q236 1064 336 1112 Q500 1150 640 1052 Q730 962 762 792" stroke-width="38.4"/><path d="M480 860 L600 760" stroke-width="11.5"/><path d="M652 812 L662 1008" stroke-width="28.2"/><path d="M644 790 L658 850" stroke-width="14.1"/><path d="M346 908 Q400 900 420 890 M362 912 Q352 980 380 1024" stroke-width="14.1"/><path d="M862 140 L896 738" stroke-width="43.5"/><path d="M856 104 L846 200" stroke-width="16.6"/><path d="M856 104 L874 170" stroke-width="17.9"/><path d="M980 200 L1004 700" stroke-width="41.0"/><path d="M974 168 L966 258" stroke-width="16.6"/><path d="M974 168 L990 230" stroke-width="17.9"/><path d="M1100 292 L1124 1008" stroke-width="43.5"/><path d="M1094 258 L1086 350" stroke-width="16.6"/><path d="M1094 258 L1110 320" stroke-width="17.9"/><path d="M1190 402 L1202 932" stroke-width="41.0"/><path d="M1184 368 L1178 458" stroke-width="16.6"/><path d="M1184 368 L1198 430" stroke-width="17.9"/><path d="M730 372 L752 700" stroke-width="38.4"/><path d="M724 338 L716 428" stroke-width="15.4"/><path d="M724 338 L740 400" stroke-width="16.6"/><path d="M940 592 L1040 482" stroke-width="12.8"/><path d="M1112 886 Q1050 810 976 866 Q940 940 1010 962 Q1070 970 1110 946" stroke-width="33.3"/><path d="M1124 1004 Q1118 1060 1040 1052 Q900 1042 780 1130 Q700 1200 642 1214 Q592 1180 602 1092" stroke-width="38.4"/><path d="M342 690 Q395 676 448 692" stroke-width="51.2"/><path d="M968 748 Q1018 736 1068 748" stroke-width="41.0"/><circle cx="487" cy="946" r="17" fill="#efe4fc" stroke="none"/><path d="M900 872 L842 906 L934 924" stroke-width="16.6"/><path d="M880 806 L930 790" stroke-width="14.1"/><path d="M376 352 L410 400 L460 322" stroke-width="16.6"/><path d="M862 1112 L906 1164 L964 1106" stroke-width="16.6"/><path d="M222 215 q-14 24 6 60 M635 235 q-14 24 6 60 M810 320 q-14 24 6 60 M922 310 q-14 24 6 60 M255 500 q-14 24 6 60 M670 530 q-14 24 6 60 M820 585 q-14 24 6 60 M1255 605 q-14 24 6 60 M242 745 q-14 24 6 60 M590 885 q-14 24 6 60 M1032 455 q-14 24 6 60" stroke-width="12.8"/><path d="M78 742 q12 18 -10 46 M200 1000 q12 18 -10 46 M790 1172 q12 18 -10 46 M120 432 q12 18 -10 46" stroke-width="10.2"/></g></svg>
<div class="t" style="left:943px;top:98.5px;font-size:22px;line-height:30px;color:#f1eff1;letter-spacing:0.14px;">Runner</div>
<svg style="left:1022px;top:97px;" width="14" height="32" viewBox="0 0 14 32"><g fill="none" stroke="#e6e4e6" stroke-width="1.9" stroke-linecap="round"  stroke-linejoin="miter"><path d="M3 2.5 L11 16 L3 29.5"/></g></svg>
<svg style="left:1042px;top:95px;" width="34" height="36" viewBox="0 0 34 36"><g fill="#a9a9a9"><path d="M13.5 14.2 L19 17.5 L8.2 34.5 Q7.6 35.2 6.8 34.8 L2.4 32 Q1.8 31.4 2.2 30.7Z"/><path d="M6.5 4.5 Q14 -0.5 21.5 4.2 L24 6 L26.2 5.2 L31.5 8.6 Q32.6 9.6 31.8 11 L29.6 14.6 Q28.6 15.6 27.4 15 L24.6 13.2 L24.3 11.5 L21.8 11.2 L19.2 15.6 L14.2 12.5 L15.6 9.2 Q12 5 6.8 6.2 Q5.8 5.4 6.5 4.5Z"/></g></svg>
<div class="t" style="left:1083px;top:98.5px;font-size:22px;line-height:30px;color:#f1eff1;letter-spacing:0.6px;">Any iOS Device (arm64, armv7)</div>
<div style="left:1458px;top:92px;width:1024px;height:44px;background:#4b494b;border-radius:11px;"></div>
<div class="t" style="left:1476.6px;top:99.5px;font-size:22px;line-height:30px;color:#e9e7e9;letter-spacing:0.62px;">Runner | Archive Runner: <b style="letter-spacing:0.75px">Succeeded</b> | Today at 12:35</div>
<svg style="left:2422.3px;top:101.8px;" width="23.8" height="24.8" viewBox="0 0 24 25"><path d="M12 1 Q13.5 1 14.3 2.5 L23.2 19.6 Q24.4 23.2 21.3 23.6 H2.7 Q-.4 23.2 .8 19.6 L9.7 2.5 Q10.5 1 12 1Z" fill="#f5c843"/><path d="M10.1 7.6 Q12 5.8 13.9 7.6 L13.1 15.6 Q12 16.5 10.9 15.6Z" fill="#fff"/><circle cx="12" cy="19.6" r="1.9" fill="#fff"/></svg>
<div class="t" style="left:2455px;top:102.6px;font-size:19px;line-height:26px;color:#e9e7e9;">1</div>
<svg style="left:2787px;top:101px;" width="26" height="26" viewBox="0 0 26 26"><g fill="none" stroke="#c9c7c9" stroke-width="2.9" stroke-linecap="round" stroke-linejoin="round" ><path d="M13 2.6 V23.6 M2.5 13.1 H23.5"/></g></svg>
<svg style="left:2850px;top:100px;" width="40" height="29" viewBox="0 0 40 29"><g fill="none" stroke="#c9c7c9" stroke-width="2.8" stroke-linecap="round"  stroke-linejoin="miter"><path d="M18.5 8.9 H35.5 M29.6 1.6 L36.6 8.9 L29.6 16.2"/><path d="M21.5 19 H4.5 M10.4 11.7 L3.4 19 L10.4 26.3"/></g></svg>
<svg style="left:888px;top:167px;" width="28" height="28" viewBox="0 0 28 28"><g fill="none" stroke="#a9a7a9" stroke-width="1.9" stroke-linecap="round"  stroke-linejoin="miter"><rect x="1.5" y="1.5" width="10" height="10"/><rect x="16.5" y="1.5" width="10" height="10"/><rect x="1.5" y="16.5" width="10" height="10"/><rect x="16.5" y="16.5" width="10" height="10"/><path d="M11.5 6.5 H16.5 M11.5 21.5 H16.5 M21.5 11.5 V16.5"/></g></svg>
<svg style="left:946px;top:168px;" width="16" height="26" viewBox="0 0 16 26"><g fill="none" stroke="#bfbdbf" stroke-width="2.3" stroke-linecap="round" stroke-linejoin="round" ><path d="M13 2 L3 13 L13 24"/></g></svg>
<svg style="left:991px;top:168px;" width="16" height="26" viewBox="0 0 16 26"><g fill="none" stroke="#767476" stroke-width="2.3" stroke-linecap="round" stroke-linejoin="round" ><path d="M3 2 L13 13 L3 24"/></g></svg>
<div style="left:1034px;top:154px;width:392px;height:54px;background:#38506f;"></div>
<svg style="left:1082px;top:167px;" width="24" height="28" viewBox="0 0 24 28"><path d="M2 0.5 H16.5 L23.5 7.5 V26 Q23.5 27.5 22 27.5 H2 Q0.5 27.5 0.5 26 V2 Q0.5 0.5 2 0.5Z" fill="#f6f5f3"/><path d="M16.5 0.5 L23.5 7.5 H18 Q16.5 7.5 16.5 6Z" fill="#fff" /><path d="M3.8 4 H14.5 M20.2 10.5 V24.3 H3.8 V4" fill="none" stroke="#e0a93b" stroke-width="1.2"/><path d="M15.4 2 V6.8 Q15.4 8.6 17.2 8.6 H22" fill="none" stroke="#e0a93b" stroke-width="1"/><g fill="none" stroke="#e0a93b" stroke-width="1.3" stroke-linecap="round"><circle cx="11.3" cy="13" r="3.2"/><circle cx="11.3" cy="13" r="1.1" fill="#e0a93b"/><path d="M6 6.8 H8.6 Q11.3 6.8 11.3 9.6"/><path d="M11.3 16.4 V18.3 Q11.3 20.8 13.8 20.8 H18 M16.2 18.8 L18.3 20.8 L16.2 22.8"/></g></svg>
<div class="t" style="left:1116px;top:166.6px;font-size:22px;line-height:30px;color:#fff;letter-spacing:0.74px;font-style:italic;">LaunchScreen.storyboard</div>
<svg style="left:2794px;top:167px;" width="40" height="28" viewBox="0 0 40 28"><g fill="none" stroke="#a9a7a9" stroke-width="1.7" stroke-linecap="round" stroke-linejoin="round" ><path d="M2 2.5 H30 M2 8.2 H37 M2 13.9 H30 M2 19.6 H37 M2 25.3 H37"/></g></svg>
<div style="left:2850px;top:170px;width:2px;height:22px;background:#555355;"></div>
<svg style="left:2868px;top:167px;" width="28" height="28" viewBox="0 0 28 28"><g fill="none" stroke="#a9a7a9" stroke-width="2" stroke-linecap="round" stroke-linejoin="round" ><rect x="1.5" y="1.5" width="25" height="25" rx="4.5"/><path d="M9.5 1.5 V26.5"/><path d="M14 14 H23 M18.5 9.5 V18.5" stroke-width="1.9"/></g></svg>
<svg style="left:893px;top:224px;" width="24" height="28" viewBox="0 0 24 28"><defs><linearGradient id="pg893224" x1="0" y1="0" x2="0" y2="1"><stop offset="0" stop-color="#3f93e3"/><stop offset="1" stop-color="#1c5bd8"/></linearGradient></defs><path d="M2 0.5 H16.5 L23.5 7.5 V26 Q23.5 27.5 22 27.5 H2 Q0.5 27.5 0.5 26 V2 Q0.5 0.5 2 0.5Z" fill="url(#pg893224)"/><path d="M16.5 0.5 L23.5 7.5 H18 Q16.5 7.5 16.5 6Z" fill="#e9f1fb"/><path d="M3.5 3.5 H16 M20.5 9 V24.5 H3.5 V3.5" fill="none" stroke="#dbe8fa" stroke-width="1"/><g fill="none" stroke="#eef4fd" stroke-width="1.7" stroke-linecap="round"><path d="M12.5 9 L7.5 19"/><path d="M11.5 9 L16.5 19"/><path d="M6 16.3 H18"/></g></svg>
<div class="t" style="left:928.5px;top:223.6px;font-size:22px;line-height:30px;color:#e3e1e3;letter-spacing:0.22px;">Runner</div>
<svg style="left:1009px;top:224px;" width="12" height="28" viewBox="0 0 12 28"><g fill="none" stroke="#8d8b8d" stroke-width="1.7" stroke-linecap="round"  stroke-linejoin="miter"><path d="M2.5 2 L9.5 14 L2.5 26"/></g></svg>
<svg style="left:1030px;top:225px;" width="28" height="26" viewBox="0 0 28 26"><path d="M1 3 Q1 0.8 3.2 0.8 H9.5 Q11 0.8 12 2 L13.2 3.4 H25 Q27.2 3.4 27.2 5.6 V8 H1Z" fill="#e8b63d"/><path d="M0.8 7 Q0.8 5.4 2.6 5.4 H25.4 Q27.2 5.4 27.2 7 V23 Q27.2 25.2 25 25.2 H3 Q0.8 25.2 0.8 23Z" fill="#f4cf63"/><path d="M0.8 17.5 L8 24 H3 Q0.8 24 0.8 22Z" fill="#d3a235"/><path d="M0.8 23 Q0.8 25.2 3 25.2 H25 Q27.2 25.2 27.2 23 V22 Q27.2 24 25 24 H3 Q0.8 24 0.8 22Z" fill="#d3a235"/></svg>
<div class="t" style="left:1069px;top:223.6px;font-size:22px;line-height:30px;color:#e3e1e3;letter-spacing:0.22px;">Runner</div>
<svg style="left:1149px;top:224px;" width="12" height="28" viewBox="0 0 12 28"><g fill="none" stroke="#8d8b8d" stroke-width="1.7" stroke-linecap="round"  stroke-linejoin="miter"><path d="M2.5 2 L9.5 14 L2.5 26"/></g></svg>
<svg style="left:1172px;top:224px;" width="24" height="28" viewBox="0 0 24 28"><path d="M2 0.5 H16.5 L23.5 7.5 V26 Q23.5 27.5 22 27.5 H2 Q0.5 27.5 0.5 26 V2 Q0.5 0.5 2 0.5Z" fill="#f6f5f3"/><path d="M16.5 0.5 L23.5 7.5 H18 Q16.5 7.5 16.5 6Z" fill="#fff" /><path d="M3.8 4 H14.5 M20.2 10.5 V24.3 H3.8 V4" fill="none" stroke="#e0a93b" stroke-width="1.2"/><path d="M15.4 2 V6.8 Q15.4 8.6 17.2 8.6 H22" fill="none" stroke="#e0a93b" stroke-width="1"/><g fill="none" stroke="#e0a93b" stroke-width="1.3" stroke-linecap="round"><circle cx="11.3" cy="13" r="3.2"/><circle cx="11.3" cy="13" r="1.1" fill="#e0a93b"/><path d="M6 6.8 H8.6 Q11.3 6.8 11.3 9.6"/><path d="M11.3 16.4 V18.3 Q11.3 20.8 13.8 20.8 H18 M16.2 18.8 L18.3 20.8 L16.2 22.8"/></g></svg>
<div class="t" style="left:1208.5px;top:223.6px;font-size:22px;line-height:30px;color:#e3e1e3;letter-spacing:0.73px;">LaunchScreen.storyboard</div>
<svg style="left:1483px;top:224px;" width="12" height="28" viewBox="0 0 12 28"><g fill="none" stroke="#8d8b8d" stroke-width="1.7" stroke-linecap="round"  stroke-linejoin="miter"><path d="M2.5 2 L9.5 14 L2.5 26"/></g></svg>
<svg style="left:1506px;top:224px;" width="24" height="28" viewBox="0 0 24 28"><path d="M2 0.5 H16.5 L23.5 7.5 V26 Q23.5 27.5 22 27.5 H2 Q0.5 27.5 0.5 26 V2 Q0.5 0.5 2 0.5Z" fill="#f6f5f3"/><path d="M16.5 0.5 L23.5 7.5 H18 Q16.5 7.5 16.5 6Z" fill="#fff" /><path d="M3.8 4 H14.5 M20.2 10.5 V24.3 H3.8 V4" fill="none" stroke="#e0a93b" stroke-width="1.2"/><path d="M15.4 2 V6.8 Q15.4 8.6 17.2 8.6 H22" fill="none" stroke="#e0a93b" stroke-width="1"/><g fill="none" stroke="#e0a93b" stroke-width="1.3" stroke-linecap="round"><circle cx="11.3" cy="13" r="3.2"/><circle cx="11.3" cy="13" r="1.1" fill="#e0a93b"/><path d="M6 6.8 H8.6 Q11.3 6.8 11.3 9.6"/><path d="M11.3 16.4 V18.3 Q11.3 20.8 13.8 20.8 H18 M16.2 18.8 L18.3 20.8 L16.2 22.8"/></g></svg>
<div class="t" style="left:1542.5px;top:223.6px;font-size:22px;line-height:30px;color:#e3e1e3;letter-spacing:0.65px;">LaunchScreen.storyboard (Base)</div>
<svg style="left:1893px;top:224px;" width="12" height="28" viewBox="0 0 12 28"><g fill="none" stroke="#8d8b8d" stroke-width="1.7" stroke-linecap="round"  stroke-linejoin="miter"><path d="M2.5 2 L9.5 14 L2.5 26"/></g></svg>
<svg style="left:1914px;top:224px;" width="28" height="28" viewBox="0 0 28 28"><path d="M1.2 7 V23 Q1.2 26.8 5 26.8 H23 Q26.8 26.8 26.8 23 V7Z" fill="#fffdf6" stroke="#eeb63a" stroke-width="2.4"/><path d="M0 0 H28 V8.5 H0Z" fill="#eeb63a"/><path d="M4.5 7 L8.5 2.2 M11.5 7 L15.5 2.2 M18.5 7 L22.5 2.2" stroke="#fff6dc" stroke-width="2.3"/><rect x="8.8" y="14.2" width="10.4" height="5.6" fill="#fff" stroke="#4a3a10" stroke-width="2"/></svg>
<div class="t" style="left:1952.5px;top:223.6px;font-size:22px;line-height:30px;color:#e3e1e3;letter-spacing:0.63px;">View Controller Scene</div>
<svg style="left:2189px;top:224px;" width="12" height="28" viewBox="0 0 12 28"><g fill="none" stroke="#8d8b8d" stroke-width="1.7" stroke-linecap="round"  stroke-linejoin="miter"><path d="M2.5 2 L9.5 14 L2.5 26"/></g></svg>
<svg style="left:2208px;top:222px;" width="32" height="32" viewBox="0 0 32 32"><circle cx="16" cy="16" r="14.6" fill="#4a3a14" stroke="#eeb63a" stroke-width="2.4"/><rect x="7.5" y="7.5" width="17" height="17" rx="1" fill="#fff"/></svg>
<div class="t" style="left:2249px;top:223.6px;font-size:22px;line-height:30px;color:#e3e1e3;letter-spacing:0.66px;">View Controller</div>
<svg style="left:2415px;top:224px;" width="12" height="28" viewBox="0 0 12 28"><g fill="none" stroke="#8d8b8d" stroke-width="1.7" stroke-linecap="round"  stroke-linejoin="miter"><path d="M2.5 2 L9.5 14 L2.5 26"/></g></svg>
<svg style="left:2434px;top:222px;" width="32" height="32" viewBox="0 0 32 32"><rect x="1" y="1" width="30" height="30" fill="#39373b" stroke="#98969b" stroke-width="1.8"/><rect x="8" y="8" width="16" height="16" fill="#fff"/></svg>
<div class="t" style="left:2475px;top:223.6px;font-size:22px;line-height:30px;color:#e3e1e3;letter-spacing:0.38px;">View</div>
<svg style="left:2830.5px;top:225px;" width="16" height="26" viewBox="0 0 16 26"><g fill="none" stroke="#bfbdbf" stroke-width="2.7" stroke-linecap="round"  stroke-linejoin="miter"><path d="M13.5 2.5 L2.5 13 L13.5 23.5"/></g></svg>
<svg style="left:2855.5px;top:225.3px;" width="24.5" height="25.5" viewBox="0 0 24 25"><path d="M12 1 Q13.5 1 14.3 2.5 L23.2 19.6 Q24.4 23.2 21.3 23.6 H2.7 Q-.4 23.2 .8 19.6 L9.7 2.5 Q10.5 1 12 1Z" fill="#f5c843"/><path d="M10.1 7.6 Q12 5.8 13.9 7.6 L13.1 15.6 Q12 16.5 10.9 15.6Z" fill="#fff"/><circle cx="12" cy="19.6" r="1.9" fill="#fff"/></svg>
<svg style="left:2889.5px;top:225px;" width="16" height="26" viewBox="0 0 16 26"><g fill="none" stroke="#bfbdbf" stroke-width="2.7" stroke-linecap="round"  stroke-linejoin="miter"><path d="M2.5 2.5 L13.5 13 L2.5 23.5"/></g></svg>
<svg style="left:3372px;top:98px;" width="40" height="32" viewBox="0 0 40 32"><g fill="none" stroke="#bdbbbd" stroke-width="2.2" stroke-linecap="round" stroke-linejoin="round" ><rect x="2" y="2" width="36" height="28" rx="4.5"/><path d="M24 2 V30"/><path d="M29 8.5 H33.5 M29 12.5 H33.5 M29 16.5 H33.5" stroke-width="1.8"/></g></svg>
<svg style="left:2987px;top:167px;" width="24" height="28" viewBox="0 0 24 28"><g fill="none" stroke="#a7a5a7" stroke-width="1.9" stroke-linecap="round" stroke-linejoin="round" ><path d="M3.5 1.5 H13 L21.5 10 V24 Q21.5 26 19.5 26 H3.5 Q1.5 26 1.5 24 V3.5 Q1.5 1.5 3.5 1.5Z"/><path d="M13 1.5 V8 Q13 10 15 10 H21.5"/></g></svg>
<svg style="left:3044px;top:167px;" width="28" height="28" viewBox="0 0 28 28"><g fill="none" stroke="#a7a5a7" stroke-width="1.9" stroke-linecap="round" stroke-linejoin="round" ><circle cx="14" cy="14" r="12.3"/><path d="M14 6 V14.5 H9"/></g></svg>
<svg style="left:3104px;top:167px;" width="28" height="28" viewBox="0 0 28 28"><circle cx="14" cy="14" r="12.3" fill="none" stroke="#a7a5a7" stroke-width="1.9"/><text x="14" y="20.5" text-anchor="middle" font-family="Liberation Sans, sans-serif" font-size="18" font-weight="700" fill="#a7a5a7">?</text></svg>
<svg style="left:3164px;top:169px;" width="28" height="24" viewBox="0 0 28 24"><g fill="none" stroke="#a7a5a7" stroke-width="1.9" stroke-linecap="round"  stroke-linejoin="miter"><rect x="1.5" y="1.5" width="25" height="21" rx="2"/><rect x="5.5" y="6" width="7.5" height="6.5"/><path d="M16.5 6 H22.5 M16.5 9.5 H22.5 M16.5 13 H22.5 M5.5 17.5 H22.5" stroke-width="1.7"/></g></svg>
<svg style="left:3224px;top:167px;" width="28" height="28" viewBox="0 0 28 28"><g stroke="#2f7cf6" stroke-width="2.6" stroke-linecap="round"><path d="M2 4 H26 M2 14 H26 M2 24 H26"/></g><g fill="#2f7cf6"><circle cx="20" cy="4" r="3.6"/><circle cx="7.5" cy="14" r="3.6"/><circle cx="19" cy="24" r="3.6"/></g></svg>
<svg style="left:3283px;top:167px;" width="28" height="28" viewBox="0 0 28 28"><g fill="none" stroke="#a7a5a7" stroke-width="2" stroke-linecap="round"  stroke-linejoin="miter"><path d="M2.5 2.5 V25.5 H25.5Z" stroke-width="2.4"/><path d="M7.5 13 V20.5 H15Z" stroke-width="2"/></g></svg>
<svg style="left:3344px;top:167px;" width="28" height="28" viewBox="0 0 28 28"><path d="M22 5.2 A11.5 11.5 0 1 0 22 22.8" fill="none" stroke="#a7a5a7" stroke-width="2" stroke-linecap="round"/><circle cx="13" cy="14" r="4.6" fill="#a7a5a7"/><path d="M17 14 H26" stroke="#a7a5a7" stroke-width="2" stroke-linecap="round"/></svg>
<div style="left:874px;top:267px;width:538px;height:1073px;background:#2a2529;"></div>
<div style="left:1412px;top:267px;width:2px;height:1073px;background:#444444;"></div>
<div style="left:1414px;top:267px;width:1502px;height:1015px;background:#404040;"></div>
<div style="left:1414px;top:1282px;width:1502px;height:58px;background:#2a2529;"></div>
<div style="left:874px;top:428px;width:538px;height:36px;background:#474647;"></div>
<div class="t" style="left:949px;top:278.6px;font-size:22px;line-height:30px;color:#e9e7e9;font-weight:700;letter-spacing:0.41px;">View Controller Scene</div>
<div class="t" style="left:980.8px;top:322.8px;font-size:22px;line-height:30px;color:#e9e7e9;letter-spacing:0.68px;">View Controller</div>
<div class="t" style="left:1012.7px;top:358.8px;font-size:22px;line-height:30px;color:#e9e7e9;letter-spacing:0.55px;">Top Layout Guide</div>
<div class="t" style="left:1012.7px;top:394.8px;font-size:22px;line-height:30px;color:#e9e7e9;letter-spacing:0.64px;">Bottom Layout Guide</div>
<div class="t" style="left:1012.7px;top:430.8px;font-size:22px;line-height:30px;color:#e9e7e9;letter-spacing:0.38px;">View</div>
<div class="t" style="left:1044.5px;top:466.8px;font-size:22px;line-height:30px;color:#e9e7e9;letter-spacing:0.46px;">LaunchImage</div>
<div class="t" style="left:1044.5px;top:502.8px;font-size:22px;line-height:30px;color:#e9e7e9;letter-spacing:0.68px;">Constraints</div>
<div class="t" style="left:980.8px;top:538.8px;font-size:22px;line-height:30px;color:#e9e7e9;letter-spacing:0.5px;">First Responder</div>
<div class="t" style="left:980.8px;top:574.8px;font-size:22px;line-height:30px;color:#e9e7e9;letter-spacing:-0.02px;">Exit</div>
<div class="t" style="left:980.8px;top:610.8px;font-size:22px;line-height:30px;color:#e9e7e9;letter-spacing:0.68px;">Storyboard Entry Point</div>
<svg style="left:881.0px;top:289.2px;" width="18" height="11.5" viewBox="0 0 18 11.5"><path d="M2 2 L9.0 9.5 L16 2" fill="none" stroke="#9d9a9e" stroke-width="2.8" stroke-linecap="round" stroke-linejoin="round"/></svg>
<svg style="left:913.0px;top:333.2px;" width="18" height="11.5" viewBox="0 0 18 11.5"><path d="M2 2 L9.0 9.5 L16 2" fill="none" stroke="#9d9a9e" stroke-width="2.8" stroke-linecap="round" stroke-linejoin="round"/></svg>
<svg style="left:945.0px;top:441.2px;" width="18" height="11.5" viewBox="0 0 18 11.5"><path d="M2 2 L9.0 9.5 L16 2" fill="none" stroke="#9d9a9e" stroke-width="2.8" stroke-linecap="round" stroke-linejoin="round"/></svg>
<svg style="left:982.2px;top:508.3px;" width="11.5" height="18" viewBox="0 0 11.5 18"><path d="M2 2 L9.5 9.0 L2 16" fill="none" stroke="#9d9a9e" stroke-width="2.8" stroke-linecap="round" stroke-linejoin="round"/></svg>
<svg style="left:912px;top:280px;" width="28" height="28" viewBox="0 0 28 28"><path d="M1.2 7 V23 Q1.2 26.8 5 26.8 H23 Q26.8 26.8 26.8 23 V7Z" fill="#fffdf6" stroke="#eeb63a" stroke-width="2.4"/><path d="M0 0 H28 V8.5 H0Z" fill="#eeb63a"/><path d="M4.5 7 L8.5 2.2 M11.5 7 L15.5 2.2 M18.5 7 L22.5 2.2" stroke="#fff6dc" stroke-width="2.3"/><rect x="8.8" y="14.2" width="10.4" height="5.6" fill="#fff" stroke="#4a3a10" stroke-width="2"/></svg>
<svg style="left:942px;top:322px;" width="32" height="32" viewBox="0 0 32 32"><circle cx="16" cy="16" r="14.6" fill="#4a3a14" stroke="#eeb63a" stroke-width="2.4"/><rect x="7.5" y="7.5" width="17" height="17" rx="1" fill="#fff"/></svg>
<svg style="left:974px;top:358px;" width="32" height="32" viewBox="0 0 32 32"><rect x="1" y="1" width="30" height="30" fill="#39373b" stroke="#98969b" stroke-width="1.8"/><rect x="10" y="6" width="12" height="14" fill="#fff"/><rect x="10" y="22" width="12" height="3.8" fill="#fff"/></svg>
<svg style="left:974px;top:394px;" width="32" height="32" viewBox="0 0 32 32"><rect x="1" y="1" width="30" height="30" fill="#39373b" stroke="#98969b" stroke-width="1.8"/><rect x="10" y="6" width="12" height="14" fill="#fff"/><rect x="10" y="22" width="12" height="3.8" fill="#fff"/></svg>
<svg style="left:974px;top:430px;" width="32" height="32" viewBox="0 0 32 32"><rect x="1" y="1" width="30" height="30" fill="#39373b" stroke="#98969b" stroke-width="1.8"/><rect x="8" y="8" width="16" height="16" fill="#fff"/></svg>
<svg style="left:1006px;top:466px;" width="32" height="32" viewBox="0 0 32 32"><rect x="1" y="1" width="30" height="30" fill="#39373b" stroke="#98969b" stroke-width="1.8"/><path d="M4 4 H28 V26 L4 28Z" fill="#fbfbfb"/><g stroke="#333" stroke-width="1.9" stroke-linecap="round" fill="none"><path d="M21 9.5 Q25 16 26.5 25" stroke-width="2.4"/><path d="M21 9.5 L8.5 9 M21 9.5 L12.5 20 M21 9.5 L20 4.5 M21 9.5 L26.5 4.5 M21 9.5 L28 12 M21 9.5 L20.5 21 M21 9.5 L15 4.5"/></g></svg>
<svg style="left:1008px;top:502.3px;" width="30" height="30" viewBox="0 0 30 30"><rect x="1" y="1" width="28" height="28" rx="5.5" fill="#000" stroke="#5b595d" stroke-width="2"/><rect x="4.5" y="4.5" width="21" height="21" fill="#000" stroke="#2f86f7" stroke-width="2"/><path d="M15 8 V12 M15 18 V22 M8 15 H12 M18 15 H22 M14 15 H16" stroke="#2f86f7" stroke-width="2"/></svg>
<svg style="left:943px;top:537px;" width="30" height="32" viewBox="0 0 30 32"><path d="M15 1.6 L27.8 8.4 V23.4 L15 30.4 L2.2 23.4 V8.4Z" fill="#5a3a10" stroke="#e3973a" stroke-width="2.4" stroke-linejoin="round"/><path d="M2.2 8.4 L15 15.2 L27.8 8.4 M15 15.2 V30.4" fill="none" stroke="#e3973a" stroke-width="2.2"/><path d="M6 14 L10.8 16.5 V24.6 L6 22.1Z" fill="none" stroke="#f3e7d3" stroke-width="1.5"/><text x="21.6" y="25.3" font-family="Liberation Sans, sans-serif" font-size="12.5" font-weight="700" fill="#fff" text-anchor="middle">1</text></svg>
<svg style="left:942px;top:574px;" width="32" height="32" viewBox="0 0 32 32"><rect x="1.2" y="1.2" width="29.6" height="29.6" fill="#5a3a10" stroke="#e3973a" stroke-width="2.4"/><path d="M21.5 11.5 V7.5 H7.5 V25 H21.5 V21" fill="none" stroke="#fff" stroke-width="2.4" stroke-linejoin="miter"/><path d="M15 16.3 H24" fill="none" stroke="#fff" stroke-width="2.4"/><path d="M23 11.8 L28.3 16.3 L23 20.8Z" fill="#fff"/></svg>
<svg style="left:943px;top:614px;" width="30" height="26" viewBox="0 0 30 26"><path d="M2.5 12.8 H26.5 M17 3.3 L27 12.8 L17 22.3" fill="none" stroke="#d8d6d8" stroke-width="2.6" stroke-linecap="round" stroke-linejoin="round"/></svg>
<div style="left:884px;top:1291px;width:515px;height:44px;background:#5d595e;border-radius:11px;border:1px solid #676368;"></div>
<svg style="left:894px;top:1300px;" width="26" height="26" viewBox="0 0 26 26"><circle cx="13" cy="13" r="11.6" fill="none" stroke="#f6f4f6" stroke-width="2.2"/><path d="M7 9.3 H19 M9 13.5 H17 M11.3 17.5 H14.7" stroke="#f6f4f6" stroke-width="2.1" stroke-linecap="round"/></svg>
<div class="t" style="left:928px;top:1296.5px;font-size:24px;line-height:33px;color:#a19ea2;letter-spacing:-0.14px;">Filter</div>
<svg style="left:1980px;top:639px;" width="78" height="28" viewBox="0 0 78 28"><defs><linearGradient id="arw" gradientUnits="userSpaceOnUse" x1="0" y1="0" x2="78" y2="0"><stop offset="0" stop-color="#7b7b7b" stop-opacity="0"/><stop offset=".5" stop-color="#7b7b7b" stop-opacity=".9"/><stop offset="1" stop-color="#7b7b7b"/></linearGradient></defs><path d="M1 14.1 H73.5" stroke="url(#arw)" stroke-width="2.2" fill="none"/><path d="M62 2.6 L74 14.1 L62 25.6" fill="none" stroke="#7b7b7b" stroke-width="2.3" stroke-linejoin="miter" stroke-linecap="round"/></svg>
<div style="left:2056px;top:283px;width:314px;height:24px;background:#252525;border:1px solid #6c6b6c;border-radius:3px;"></div>
<svg style="left:2179px;top:289px;" width="12" height="12" viewBox="0 0 12 12"><circle cx="6" cy="6" r="5.2" fill="#4a3a14" stroke="#eeb63a" stroke-width="1.2"/><rect x="3.2" y="3.2" width="5.6" height="5.6" fill="#fff"/></svg>
<svg style="left:2207px;top:289px;" width="12" height="12" viewBox="0 0 12 12"><path d="M6 .6 L11 3.3 V8.7 L6 11.4 L1 8.7 V3.3Z" fill="#a8763a" stroke="#e0923a" stroke-width="1"/><path d="M1.3 3.4 L6 1 L10.7 3.4 L6 5.8Z" fill="#e9a451"/></svg>
<svg style="left:2234px;top:289px;" width="12" height="12" viewBox="0 0 12 12"><rect x=".6" y=".6" width="10.8" height="10.8" fill="#5a3a16" stroke="#e0923a" stroke-width="1.2"/><path d="M7 4 V3 H3 V9 H7 V8 M5.5 6 H9.5" fill="none" stroke="#e9c9a0" stroke-width="1"/></svg>
<div style="left:2057px;top:316px;width:312px;height:673px;background:#6e1be6;border-radius:31px;overflow:hidden;box-shadow:0 0 0 1.3px #0c0c0c;"><div style="left:0px;top:0px;width:312px;height:60px;background:#7000ee;"></div><div style="left:0px;top:613px;width:312px;height:60px;background:#7000ee;"></div><div style="left:69.0px;top:-19px;width:174px;height:44px;background:#000;border-radius:19px;"></div><div style="left:100.8px;top:664.6px;width:110.5px;height:3.8px;background:#000;border-radius:1.9px;"></div></div>
<svg style="left:2155.0px;top:596.0px;" width="116" height="112.0" viewBox="0 0 1326 1280"><g fill="none" stroke="#fff" stroke-linecap="round" stroke-linejoin="round"><path d="M338 188 L608 76" stroke-width="15.4"/><path d="M338 188 L350 210" stroke-width="15.4"/><path d="M720 92 Q750 70 770 78" stroke-width="15.4"/><path d="M218 338 Q470 190 752 172" stroke-width="43.5"/><path d="M752 172 Q800 196 770 245 Q700 335 626 390" stroke-width="21.8"/><path d="M218 340 Q440 500 705 680" stroke-width="53.8"/><path d="M526 280 L548 400 Q590 470 640 508" stroke-width="30.7"/><path d="M518 258 L536 330" stroke-width="15.4"/><path d="M62 552 L188 468" stroke-width="11.5"/><path d="M176 492 Q108 620 156 724 Q300 700 470 528" stroke-width="28.2"/><path d="M140 746 Q100 860 166 924 Q300 940 440 842 Q545 770 622 700" stroke-width="30.7"/><path d="M268 936 Q236 1064 336 1112 Q500 1150 640 1052 Q730 962 762 792" stroke-width="38.4"/><path d="M480 860 L600 760" stroke-width="11.5"/><path d="M652 812 L662 1008" stroke-width="28.2"/><path d="M644 790 L658 850" stroke-width="14.1"/><path d="M346 908 Q400 900 420 890 M362 912 Q352 980 380 1024" stroke-width="14.1"/><path d="M862 140 L896 738" stroke-width="43.5"/><path d="M856 104 L846 200" stroke-width="16.6"/><path d="M856 104 L874 170" stroke-width="17.9"/><path d="M980 200 L1004 700" stroke-width="41.0"/><path d="M974 168 L966 258" stroke-width="16.6"/><path d="M974 168 L990 230" stroke-width="17.9"/><path d="M1100 292 L1124 1008" stroke-width="43.5"/><path d="M1094 258 L1086 350" stroke-width="16.6"/><path d="M1094 258 L1110 320" stroke-width="17.9"/><path d="M1190 402 L1202 932" stroke-width="41.0"/><path d="M1184 368 L1178 458" stroke-width="16.6"/><path d="M1184 368 L1198 430" stroke-width="17.9"/><path d="M730 372 L752 700" stroke-width="38.4"/><path d="M724 338 L716 428" stroke-width="15.4"/><path d="M724 338 L740 400" stroke-width="16.6"/><path d="M940 592 L1040 482" stroke-width="12.8"/><path d="M1112 886 Q1050 810 976 866 Q940 940 1010 962 Q1070 970 1110 946" stroke-width="33.3"/><path d="M1124 1004 Q1118 1060 1040 1052 Q900 1042 780 1130 Q700 1200 642 1214 Q592 1180 602 1092" stroke-width="38.4"/><path d="M342 690 Q395 676 448 692" stroke-width="51.2"/><path d="M968 748 Q1018 736 1068 748" stroke-width="41.0"/><circle cx="487" cy="946" r="17" fill="#fff" stroke="none"/><path d="M900 872 L842 906 L934 924" stroke-width="16.6"/><path d="M880 806 L930 790" stroke-width="14.1"/><path d="M376 352 L410 400 L460 322" stroke-width="16.6"/><path d="M862 1112 L906 1164 L964 1106" stroke-width="16.6"/><path d="M222 215 q-14 24 6 60 M635 235 q-14 24 6 60 M810 320 q-14 24 6 60 M922 310 q-14 24 6 60 M255 500 q-14 24 6 60 M670 530 q-14 24 6 60 M820 585 q-14 24 6 60 M1255 605 q-14 24 6 60 M242 745 q-14 24 6 60 M590 885 q-14 24 6 60 M1032 455 q-14 24 6 60" stroke-width="12.8"/><path d="M78 742 q12 18 -10 46 M200 1000 q12 18 -10 46 M790 1172 q12 18 -10 46 M120 432 q12 18 -10 46" stroke-width="10.2"/></g></svg>
<div style="left:2652px;top:309.5px;width:222.5px;height:403.5px;background:#4d4d4d;border:1.5px solid #7d7d7d;border-radius:11px;overflow:hidden;box-shadow:0 0 0 1px #0b0b0b,0 6px 20px 2px rgba(0,0,0,.33);"><div style="left:0px;top:0px;width:222px;height:4.5px;background:#323232;"></div><div style="left:0px;top:4.5px;width:222px;height:1.2px;background:#b4b4b4;"></div></div>
<div style="left:2683px;top:340px;width:155.5px;height:336px;background:#6e1be6;border-radius:14px;overflow:hidden;"><div style="left:0px;top:0px;width:155.5px;height:30px;background:#7000ee;"></div><div style="left:0px;top:306px;width:155.5px;height:30px;background:#7000ee;"></div><div style="left:34.8px;top:-9px;width:86px;height:21px;background:#000;border-radius:9px;"></div><div style="left:77.8px;top:333.7px;width:0px;height:0px;background:#000;border-radius:0.0px;"></div></div>
<svg style="left:2731.0px;top:480.0px;" width="58" height="56.0" viewBox="0 0 1326 1280"><g fill="none" stroke="#fff" stroke-linecap="round" stroke-linejoin="round"><path d="M338 188 L608 76" stroke-width="15.4"/><path d="M338 188 L350 210" stroke-width="15.4"/><path d="M720 92 Q750 70 770 78" stroke-width="15.4"/><path d="M218 338 Q470 190 752 172" stroke-width="43.5"/><path d="M752 172 Q800 196 770 245 Q700 335 626 390" stroke-width="21.8"/><path d="M218 340 Q440 500 705 680" stroke-width="53.8"/><path d="M526 280 L548 400 Q590 470 640 508" stroke-width="30.7"/><path d="M518 258 L536 330" stroke-width="15.4"/><path d="M62 552 L188 468" stroke-width="11.5"/><path d="M176 492 Q108 620 156 724 Q300 700 470 528" stroke-width="28.2"/><path d="M140 746 Q100 860 166 924 Q300 940 440 842 Q545 770 622 700" stroke-width="30.7"/><path d="M268 936 Q236 1064 336 1112 Q500 1150 640 1052 Q730 962 762 792" stroke-width="38.4"/><path d="M480 860 L600 760" stroke-width="11.5"/><path d="M652 812 L662 1008" stroke-width="28.2"/><path d="M644 790 L658 850" stroke-width="14.1"/><path d="M346 908 Q400 900 420 890 M362 912 Q352 980 380 1024" stroke-width="14.1"/><path d="M862 140 L896 738" stroke-width="43.5"/><path d="M856 104 L846 200" stroke-width="16.6"/><path d="M856 104 L874 170" stroke-width="17.9"/><path d="M980 200 L1004 700" stroke-width="41.0"/><path d="M974 168 L966 258" stroke-width="16.6"/><path d="M974 168 L990 230" stroke-width="17.9"/><path d="M1100 292 L1124 1008" stroke-width="43.5"/><path d="M1094 258 L1086 350" stroke-width="16.6"/><path d="M1094 258 L1110 320" stroke-width="17.9"/><path d="M1190 402 L1202 932" stroke-width="41.0"/><path d="M1184 368 L1178 458" stroke-width="16.6"/><path d="M1184 368 L1198 430" stroke-width="17.9"/><path d="M730 372 L752 700" stroke-width="38.4"/><path d="M724 338 L716 428" stroke-width="15.4"/><path d="M724 338 L740 400" stroke-width="16.6"/><path d="M940 592 L1040 482" stroke-width="12.8"/><path d="M1112 886 Q1050 810 976 866 Q940 940 1010 962 Q1070 970 1110 946" stroke-width="33.3"/><path d="M1124 1004 Q1118 1060 1040 1052 Q900 1042 780 1130 Q700 1200 642 1214 Q592 1180 602 1092" stroke-width="38.4"/><path d="M342 690 Q395 676 448 692" stroke-width="51.2"/><path d="M968 748 Q1018 736 1068 748" stroke-width="41.0"/><circle cx="487" cy="946" r="17" fill="#fff" stroke="none"/><path d="M900 872 L842 906 L934 924" stroke-width="16.6"/><path d="M880 806 L930 790" stroke-width="14.1"/><path d="M376 352 L410 400 L460 322" stroke-width="16.6"/><path d="M862 1112 L906 1164 L964 1106" stroke-width="16.6"/><path d="M222 215 q-14 24 6 60 M635 235 q-14 24 6 60 M810 320 q-14 24 6 60 M922 310 q-14 24 6 60 M255 500 q-14 24 6 60 M670 530 q-14 24 6 60 M820 585 q-14 24 6 60 M1255 605 q-14 24 6 60 M242 745 q-14 24 6 60 M590 885 q-14 24 6 60 M1032 455 q-14 24 6 60" stroke-width="12.8"/><path d="M78 742 q12 18 -10 46 M200 1000 q12 18 -10 46 M790 1172 q12 18 -10 46 M120 432 q12 18 -10 46" stroke-width="10.2"/></g></svg>
<svg style="left:1432px;top:1298px;" width="28" height="28" viewBox="0 0 28 28"><g fill="none" stroke="#b1adb1" stroke-width="1.9" stroke-linecap="butt" stroke-linejoin="miter"><rect x="1.5" y="1.5" width="24" height="23.5" rx="2.5"/><path d="M9.2 1.5 V25"/></g></svg>
<div class="t" style="left:1486.5px;top:1292.5px;font-size:26px;line-height:36px;color:#f1eff1;letter-spacing:0.15px;">View as: iPhone 11 (</div>
<div class="t" style="left:1727px;top:1302.0px;font-size:17px;line-height:23px;color:#8f8c90;">w</div>
<div class="t" style="left:1740.5px;top:1292.5px;font-size:26px;line-height:36px;color:#f1eff1;">C</div>
<div class="t" style="left:1767px;top:1302.0px;font-size:17px;line-height:23px;color:#8f8c90;">h</div>
<div class="t" style="left:1780.5px;top:1292.5px;font-size:26px;line-height:36px;color:#f1eff1;letter-spacing:-0.6px;">R)</div>
<svg style="left:2072px;top:1295px;" width="30" height="30" viewBox="0 0 30 30"><g fill="none" stroke="#b1adb1" stroke-width="2" stroke-linecap="butt" stroke-linejoin="miter"><circle cx="11.5" cy="11.5" r="9.5"/><path d="M18.5 18.5 L27.5 27.5" stroke-width="2.6" stroke-linecap="round"/><path d="M7 11.5 H16" stroke-width="1.8"/></g></svg>
<div class="t" style="left:2136px;top:1293.0px;font-size:25px;line-height:35px;color:#b9b6ba;letter-spacing:1.98px;">38%</div>
<svg style="left:2226px;top:1295px;" width="30" height="30" viewBox="0 0 30 30"><g fill="none" stroke="#b1adb1" stroke-width="2" stroke-linecap="butt" stroke-linejoin="miter"><circle cx="11.5" cy="11.5" r="9.5"/><path d="M18.5 18.5 L27.5 27.5" stroke-width="2.6" stroke-linecap="round"/><path d="M7 11.5 H16 M11.5 7 V16" stroke-width="1.8"/></g></svg>
<svg style="left:2651px;top:1295px;" width="32" height="32" viewBox="0 0 32 32"><g fill="none" stroke="#b1adb1" stroke-width="2" stroke-linecap="butt" stroke-linejoin="miter"><path d="M2 7 V2 H7 M25 2 H30 V7 M30 25 V30 H25 M7 30 H2 V25"/><path d="M9 17.5 A8.2 8.2 0 1 1 17 22.5 H10.5 M14.5 18 L10 22.5 L14.5 27" stroke-linecap="round" stroke-linejoin="round"/></g></svg>
<svg style="left:2703px;top:1295px;" width="32" height="32" viewBox="0 0 32 32"><g fill="none" stroke="#b1adb1" stroke-width="2" stroke-linecap="butt" stroke-linejoin="miter"><path d="M2 1 V31" /><rect x="5.5" y="5.5" width="18" height="8.5"/><rect x="5.5" y="17.5" width="24.5" height="8.5"/></g></svg>
<svg style="left:2755px;top:1295px;" width="32" height="32" viewBox="0 0 32 32"><g fill="none" stroke="#b1adb1" stroke-width="2" stroke-linecap="butt" stroke-linejoin="miter"><rect x="10" y="10" width="12" height="12"/><path d="M16 1.5 V6.5 M11.5 1.5 H20.5 M16 25.5 V30.5 M11.5 30.5 H20.5 M1.5 16 H6.5 M1.5 11.5 V20.5 M25.5 16 H30.5 M30.5 11.5 V20.5"/></g></svg>
<svg style="left:2807px;top:1295px;" width="32" height="32" viewBox="0 0 32 32"><g fill="none" stroke="#b1adb1" stroke-width="2" stroke-linecap="butt" stroke-linejoin="miter"><path d="M16 8.5 L24.5 24 H7.5Z" stroke-linejoin="round"/><circle cx="16" cy="18.5" r="2.8" fill="#b1adb1" stroke="none"/><path d="M1.5 16 H6 M1.5 11.5 V20.5 M26 16 H30.5 M30.5 11.5 V20.5"/></g></svg>
<svg style="left:2863px;top:1295px;" width="32" height="32" viewBox="0 0 32 32"><g fill="none" stroke="#b1adb1" stroke-width="2" stroke-linecap="butt" stroke-linejoin="miter"><path d="M12 6 H2 V30 H30 V6 H20"/><path d="M16 3 V20 M10 14.5 L16 20.5 L22 14.5" stroke-linejoin="miter"/></g></svg>
<div class="t" style="left:2932.5px;top:214.5px;font-size:26px;line-height:36px;color:#9b999b;font-weight:700;letter-spacing:-0.44px;">View</div>
<div class="t" style="right:473px;top:272.0px;font-size:22px;line-height:30px;color:#e4e2e4;text-align:right;letter-spacing:-0.22px;">Content Mode</div>
<div style="left:3088px;top:270px;width:334px;height:32px;background:#5d595e;border-radius:8.5px;box-shadow:inset 0 1px 0 rgba(255,255,255,.09),0 1px 1.5px rgba(0,0,0,.45);"></div><div class="t" style="left:3100.5px;top:271.0px;font-size:22.5px;line-height:31px;color:#f0eef0;letter-spacing:0.16px;">Scale To Fill</div><div style="left:3394px;top:274px;width:24px;height:24px;background:linear-gradient(#3372e4,#2763d8);border-radius:6.5px;box-shadow:0 .5px 1px rgba(0,0,0,.35);"></div><svg style="left:3394px;top:274px;" width="24" height="24" viewBox="0 0 24 24"><path d="M7.8 9.6 L12 5.7 L16.2 9.6 M7.8 14.4 L12 18.3 L16.2 14.4" fill="none" stroke="#fff" stroke-width="2.4" stroke-linecap="round" stroke-linejoin="round"/></svg>
<div class="t" style="right:473px;top:315.5px;font-size:22px;line-height:30px;color:#e4e2e4;text-align:right;letter-spacing:-0.39px;">Semantic</div>
<div style="left:3088px;top:314px;width:334px;height:32px;background:#5d595e;border-radius:8.5px;box-shadow:inset 0 1px 0 rgba(255,255,255,.09),0 1px 1.5px rgba(0,0,0,.45);"></div><div class="t" style="left:3100.5px;top:315.0px;font-size:22.5px;line-height:31px;color:#f0eef0;letter-spacing:0.56px;">Unspecified</div><div style="left:3394px;top:318px;width:24px;height:24px;background:linear-gradient(#3372e4,#2763d8);border-radius:6.5px;box-shadow:0 .5px 1px rgba(0,0,0,.35);"></div><svg style="left:3394px;top:318px;" width="24" height="24" viewBox="0 0 24 24"><path d="M7.8 9.6 L12 5.7 L16.2 9.6 M7.8 14.4 L12 18.3 L16.2 14.4" fill="none" stroke="#fff" stroke-width="2.4" stroke-linecap="round" stroke-linejoin="round"/></svg>
<div class="t" style="right:473px;top:361.5px;font-size:22px;line-height:30px;color:#e4e2e4;text-align:right;letter-spacing:-0.79px;">Tag</div>
<div style="left:3088px;top:360px;width:310px;height:31px;background:#2e2a2e;border:1px solid #464348;border-bottom-color:#625e63;"></div><div class="t" style="right:160px;top:360.5px;font-size:23px;line-height:32px;color:#ebe9eb;text-align:right;">0</div>
<div style="left:3402px;top:357.5px;width:22px;height:32px;background:#5d595e;border-radius:8px;box-shadow:inset 0 1px 0 rgba(255,255,255,.09),0 1px 1.5px rgba(0,0,0,.45);"></div><div style="left:3402px;top:372.75px;width:22px;height:1.5px;background:#4b484c;"></div><svg style="left:3402px;top:357.5px;" width="22" height="32" viewBox="0 0 22 32"><path d="M5 10.8 L11 5.3 L17 10.8 M5 21.2 L11 26.7 L17 21.2" fill="none" stroke="#e9e7e9" stroke-width="2.5" stroke-linecap="round" stroke-linejoin="round"/></svg>
<div style="left:2934px;top:404px;width:488px;height:2px;background:#3c393d;"></div>
<div class="t" style="right:473px;top:413.5px;font-size:22px;line-height:30px;color:#e4e2e4;text-align:right;">Interaction</div>
<div style="left:3088px;top:416px;width:24px;height:24px;background:linear-gradient(#3a80f2,#2467e0);border-radius:6px;box-shadow:0 1px 1.5px rgba(0,0,0,.4);"></div><svg style="left:3088px;top:416px;" width="24" height="24" viewBox="0 0 24 24"><path d="M6 12.5 L10.3 17.5 L18 6.5" fill="none" stroke="#fff" stroke-width="2.7" stroke-linecap="round" stroke-linejoin="round"/></svg><div class="t" style="left:3120.5px;top:413.0px;font-size:22.5px;line-height:31px;color:#f0eef0;letter-spacing:0.41px;">User Interaction Enabled</div>
<div style="left:3088px;top:452px;width:24px;height:24px;background:linear-gradient(#625e63,#565257);border-radius:6px;box-shadow:inset 0 1px 0 rgba(255,255,255,.12),0 1px 1.5px rgba(0,0,0,.4);"></div><div class="t" style="left:3120.5px;top:449.0px;font-size:22.5px;line-height:31px;color:#f0eef0;letter-spacing:0.6px;">Multiple Touch</div>
<div style="left:2934px;top:486px;width:488px;height:2px;background:#3c393d;"></div>
<div class="t" style="right:473px;top:502.0px;font-size:22px;line-height:30px;color:#e4e2e4;text-align:right;letter-spacing:-0.55px;">Alpha</div>
<div style="left:3088px;top:500px;width:310px;height:31px;background:#2e2a2e;border:1px solid #464348;border-bottom-color:#625e63;"></div><div class="t" style="right:160px;top:500.5px;font-size:23px;line-height:32px;color:#ebe9eb;text-align:right;">1</div>
<div style="left:3402px;top:498px;width:22px;height:32px;background:#5d595e;border-radius:8px;box-shadow:inset 0 1px 0 rgba(255,255,255,.09),0 1px 1.5px rgba(0,0,0,.45);"></div><div style="left:3402px;top:513.25px;width:22px;height:1.5px;background:#4b484c;"></div><svg style="left:3402px;top:498px;" width="22" height="32" viewBox="0 0 22 32"><path d="M5 10.8 L11 5.3 L17 10.8 M5 21.2 L11 26.7 L17 21.2" fill="none" stroke="#e9e7e9" stroke-width="2.5" stroke-linecap="round" stroke-linejoin="round"/></svg>
<div class="t" style="right:473px;top:545.5px;font-size:22px;line-height:30px;color:#e4e2e4;text-align:right;letter-spacing:-0.32px;">Background</div>
<div style="left:3086px;top:544px;width:338px;height:32px;background:#5d595e;border-radius:8.5px;box-shadow:inset 0 1px 0 rgba(255,255,255,.09),0 1px 1.5px rgba(0,0,0,.45);"></div><div style="left:3098px;top:552px;width:56px;height:16px;background:#5e22e2;"></div><div class="t" style="left:3162.5px;top:545.0px;font-size:22.5px;line-height:31px;color:#f0eef0;letter-spacing:0.31px;">Custom</div><div style="left:3396px;top:548px;width:24px;height:24px;background:linear-gradient(#3372e4,#2763d8);border-radius:6.5px;box-shadow:0 .5px 1px rgba(0,0,0,.35);"></div><svg style="left:3396px;top:548px;" width="24" height="24" viewBox="0 0 24 24"><path d="M7.8 9.6 L12 5.7 L16.2 9.6 M7.8 14.4 L12 18.3 L16.2 14.4" fill="none" stroke="#fff" stroke-width="2.4" stroke-linecap="round" stroke-linejoin="round"/></svg>
<div class="t" style="right:473px;top:589.5px;font-size:22px;line-height:30px;color:#e4e2e4;text-align:right;letter-spacing:0.06px;">Tint</div>
<div style="left:3086px;top:588px;width:338px;height:32px;background:#5d595e;border-radius:8.5px;box-shadow:inset 0 1px 0 rgba(255,255,255,.09),0 1px 1.5px rgba(0,0,0,.45);"></div><div style="left:3098px;top:596px;width:56px;height:16px;background:#2c6fdc;"></div><div class="t" style="left:3162.5px;top:589.0px;font-size:22.5px;line-height:31px;color:#f0eef0;letter-spacing:0.46px;">Default</div><div style="left:3396px;top:592px;width:24px;height:24px;background:linear-gradient(#3372e4,#2763d8);border-radius:6.5px;box-shadow:0 .5px 1px rgba(0,0,0,.35);"></div><svg style="left:3396px;top:592px;" width="24" height="24" viewBox="0 0 24 24"><path d="M7.8 9.6 L12 5.7 L16.2 9.6 M7.8 14.4 L12 18.3 L16.2 14.4" fill="none" stroke="#fff" stroke-width="2.4" stroke-linecap="round" stroke-linejoin="round"/></svg>
<div style="left:2934px;top:632.5px;width:488px;height:2px;background:#3c393d;"></div>
<div class="t" style="right:473px;top:641.5px;font-size:22px;line-height:30px;color:#e4e2e4;text-align:right;letter-spacing:-0.43px;">Drawing</div>
<div style="left:3088px;top:644.3px;width:24px;height:24px;background:linear-gradient(#3a80f2,#2467e0);border-radius:6px;box-shadow:0 1px 1.5px rgba(0,0,0,.4);"></div><svg style="left:3088px;top:644.3px;" width="24" height="24" viewBox="0 0 24 24"><path d="M6 12.5 L10.3 17.5 L18 6.5" fill="none" stroke="#fff" stroke-width="2.7" stroke-linecap="round" stroke-linejoin="round"/></svg><div class="t" style="left:3120.5px;top:641.3px;font-size:22.5px;line-height:31px;color:#f0eef0;letter-spacing:0.07px;">Opaque</div>
<div style="left:3088px;top:680px;width:24px;height:24px;background:linear-gradient(#625e63,#565257);border-radius:6px;box-shadow:inset 0 1px 0 rgba(255,255,255,.12),0 1px 1.5px rgba(0,0,0,.4);"></div><div class="t" style="left:3120.5px;top:677.0px;font-size:22.5px;line-height:31px;color:#f0eef0;letter-spacing:0.38px;">Hidden</div>
<div style="left:3088px;top:716px;width:24px;height:24px;background:linear-gradient(#3a80f2,#2467e0);border-radius:6px;box-shadow:0 1px 1.5px rgba(0,0,0,.4);"></div><svg style="left:3088px;top:716px;" width="24" height="24" viewBox="0 0 24 24"><path d="M6 12.5 L10.3 17.5 L18 6.5" fill="none" stroke="#fff" stroke-width="2.7" stroke-linecap="round" stroke-linejoin="round"/></svg><div class="t" style="left:3120.5px;top:713.0px;font-size:22.5px;line-height:31px;color:#f0eef0;letter-spacing:0.38px;">Clears Graphics Context</div>
<div style="left:3088px;top:752.2px;width:24px;height:24px;background:linear-gradient(#625e63,#565257);border-radius:6px;box-shadow:inset 0 1px 0 rgba(255,255,255,.12),0 1px 1.5px rgba(0,0,0,.4);"></div><div class="t" style="left:3120.5px;top:749.2px;font-size:22.5px;line-height:31px;color:#f0eef0;letter-spacing:0.41px;">Clips to Bounds</div>
<div style="left:3088px;top:788px;width:24px;height:24px;background:linear-gradient(#3a80f2,#2467e0);border-radius:6px;box-shadow:0 1px 1.5px rgba(0,0,0,.4);"></div><svg style="left:3088px;top:788px;" width="24" height="24" viewBox="0 0 24 24"><path d="M6 12.5 L10.3 17.5 L18 6.5" fill="none" stroke="#fff" stroke-width="2.7" stroke-linecap="round" stroke-linejoin="round"/></svg><div class="t" style="left:3120.5px;top:785.0px;font-size:22.5px;line-height:31px;color:#f0eef0;letter-spacing:0.32px;">Autoresize Subviews</div>
<div style="left:2934px;top:822px;width:488px;height:2px;background:#3c393d;"></div>
<div class="t" style="right:473px;top:837.5px;font-size:22px;line-height:30px;color:#e4e2e4;text-align:right;">Stretching</div>
<div style="left:3088px;top:836px;width:132px;height:31px;background:#2e2a2e;border:1px solid #464348;border-bottom-color:#625e63;"></div><div class="t" style="right:338px;top:836.5px;font-size:23px;line-height:32px;color:#ebe9eb;text-align:right;">0</div>
<div style="left:3225px;top:834px;width:22px;height:32px;background:#5d595e;border-radius:8px;box-shadow:inset 0 1px 0 rgba(255,255,255,.09),0 1px 1.5px rgba(0,0,0,.45);"></div><div style="left:3225px;top:849.25px;width:22px;height:1.5px;background:#4b484c;"></div><svg style="left:3225px;top:834px;" width="22" height="32" viewBox="0 0 22 32"><path d="M5 10.8 L11 5.3 L17 10.8 M5 21.2 L11 26.7 L17 21.2" fill="none" stroke="#e9e7e9" stroke-width="2.5" stroke-linecap="round" stroke-linejoin="round"/></svg>
<div style="left:3264px;top:836px;width:134px;height:31px;background:#2e2a2e;border:1px solid #464348;border-bottom-color:#625e63;"></div><div class="t" style="right:160px;top:836.5px;font-size:23px;line-height:32px;color:#ebe9eb;text-align:right;">0</div>
<div style="left:3403px;top:834px;width:22px;height:32px;background:#5d595e;border-radius:8px;box-shadow:inset 0 1px 0 rgba(255,255,255,.09),0 1px 1.5px rgba(0,0,0,.45);"></div><div style="left:3403px;top:849.25px;width:22px;height:1.5px;background:#4b484c;"></div><svg style="left:3403px;top:834px;" width="22" height="32" viewBox="0 0 22 32"><path d="M5 10.8 L11 5.3 L17 10.8 M5 21.2 L11 26.7 L17 21.2" fill="none" stroke="#e9e7e9" stroke-width="2.5" stroke-linecap="round" stroke-linejoin="round"/></svg>
<div class="t" style="left:2853.6px;width:600px;top:866.5px;font-size:22px;line-height:30px;color:#e4e2e4;text-align:center;">X</div>
<div class="t" style="left:3031px;width:600px;top:866.5px;font-size:22px;line-height:30px;color:#e4e2e4;text-align:center;">Y</div>
<div style="left:3088px;top:908px;width:132px;height:31px;background:#2e2a2e;border:1px solid #464348;border-bottom-color:#625e63;"></div><div class="t" style="right:338px;top:908.5px;font-size:23px;line-height:32px;color:#ebe9eb;text-align:right;">1</div>
<div style="left:3225px;top:906px;width:22px;height:32px;background:#5d595e;border-radius:8px;box-shadow:inset 0 1px 0 rgba(255,255,255,.09),0 1px 1.5px rgba(0,0,0,.45);"></div><div style="left:3225px;top:921.25px;width:22px;height:1.5px;background:#4b484c;"></div><svg style="left:3225px;top:906px;" width="22" height="32" viewBox="0 0 22 32"><path d="M5 10.8 L11 5.3 L17 10.8 M5 21.2 L11 26.7 L17 21.2" fill="none" stroke="#e9e7e9" stroke-width="2.5" stroke-linecap="round" stroke-linejoin="round"/></svg>
<div style="left:3264px;top:908px;width:134px;height:31px;background:#2e2a2e;border:1px solid #464348;border-bottom-color:#625e63;"></div><div class="t" style="right:160px;top:908.5px;font-size:23px;line-height:32px;color:#ebe9eb;text-align:right;">1</div>
<div style="left:3403px;top:906px;width:22px;height:32px;background:#5d595e;border-radius:8px;box-shadow:inset 0 1px 0 rgba(255,255,255,.09),0 1px 1.5px rgba(0,0,0,.45);"></div><div style="left:3403px;top:921.25px;width:22px;height:1.5px;background:#4b484c;"></div><svg style="left:3403px;top:906px;" width="22" height="32" viewBox="0 0 22 32"><path d="M5 10.8 L11 5.3 L17 10.8 M5 21.2 L11 26.7 L17 21.2" fill="none" stroke="#e9e7e9" stroke-width="2.5" stroke-linecap="round" stroke-linejoin="round"/></svg>
<div class="t" style="left:2853.6px;width:600px;top:938.5px;font-size:22px;line-height:30px;color:#e4e2e4;text-align:center;letter-spacing:0.4px;">Width</div>
<div class="t" style="left:3031px;width:600px;top:938.5px;font-size:22px;line-height:30px;color:#e4e2e4;text-align:center;letter-spacing:0.4px;">Height</div>
<div style="left:2934px;top:991.5px;width:488px;height:2px;background:#3c393d;"></div>
<div style="left:874px;top:1340px;width:2042px;height:2px;background:#000;"></div>
<div style="left:874px;top:1342px;width:2042px;height:57px;background:#242024;"></div>
<div style="left:874px;top:1398px;width:2042px;height:2px;background:#000;"></div>
<div style="left:874px;top:1400px;width:990px;height:216px;background:#242024;"></div>
<div style="left:1864px;top:1400px;width:2px;height:216px;background:#000;"></div>
<div style="left:1866px;top:1400px;width:1050px;height:216px;background:#292a2f;"></div>
<svg style="left:892px;top:1356px;" width="28" height="28" viewBox="0 0 28 28"><rect x="2" y="2" width="24" height="24" rx="3" fill="none" stroke="#a9a6aa" stroke-width="2"/><path d="M2 18 H26" stroke="#a9a6aa" stroke-width="2"/></svg>
<svg style="left:954px;top:1360px;" width="32" height="20" viewBox="0 0 32 20"><path d="M1.7 0.8 H21.6 Q22.4 0.8 23 1.4 L30.6 9.4 Q31.1 10 30.6 10.6 L23 18.6 Q22.4 19.2 21.6 19.2 H1.7 Q0.7 19.2 0.7 18.2 V1.8 Q0.7 0.8 1.7 0.8Z" fill="#2f7cf6"/></svg>
<div class="t" style="left:890px;top:1572.5px;font-size:23px;line-height:32px;color:#e4e2e4;letter-spacing:0.4px;">Auto</div>
<svg style="left:944.5px;top:1576px;" width="13" height="24" viewBox="0 0 13 24"><path d="M2 8.6 L6.5 4.6 L11 8.6 M2 15.4 L6.5 19.4 L11 15.4" fill="none" stroke="#cfcdcf" stroke-width="2.4" stroke-linecap="round" stroke-linejoin="round"/></svg>
<div style="left:970px;top:1572px;width:2px;height:32px;background:#555256;"></div>
<svg style="left:983px;top:1572px;" width="32" height="30" viewBox="0 0 32 30"><path d="M1.5 15 Q8 6 16 6 Q24 6 30.5 15 Q24 24 16 24 Q8 24 1.5 15Z" fill="none" stroke="#5f5c60" stroke-width="2"/><circle cx="16" cy="15" r="6.2" fill="#5f5c60"/><circle cx="16" cy="15" r="2.2" fill="#242024"/></svg>
<svg style="left:1027px;top:1573px;" width="28" height="28" viewBox="0 0 28 28"><circle cx="14" cy="14" r="12" fill="none" stroke="#5f5c60" stroke-width="2"/><path d="M11.3 12.3 H14.3 V20.3 M10.8 20.3 H17.4" fill="none" stroke="#5f5c60" stroke-width="2"/><circle cx="13.6" cy="7.8" r="1.6" fill="#5f5c60"/></svg>
<div style="left:1508px;top:1566px;width:346px;height:44px;background:#333133;border:1px solid #535153;border-radius:11px;"></div>
<svg style="left:1518px;top:1575px;" width="26" height="26" viewBox="0 0 26 26"><circle cx="13" cy="13" r="11.6" fill="none" stroke="#e8e6e8" stroke-width="2.2"/><path d="M7 9.3 H19 M9 13.5 H17 M11.3 17.5 H14.7" stroke="#e8e6e8" stroke-width="2.1" stroke-linecap="round"/></svg>
<div class="t" style="left:1552px;top:1572.0px;font-size:24px;line-height:33px;color:#77757a;letter-spacing:-0.22px;">Filter</div>
<div class="t" style="left:1882px;top:1572.5px;font-size:23px;line-height:32px;color:#e4e2e4;letter-spacing:0.4px;">All Output</div>
<svg style="left:1992px;top:1576px;" width="13" height="24" viewBox="0 0 13 24"><path d="M2 8.6 L6.5 4.6 L11 8.6 M2 15.4 L6.5 19.4 L11 15.4" fill="none" stroke="#cfcdcf" stroke-width="2.4" stroke-linecap="round" stroke-linejoin="round"/></svg>
<div style="left:2410px;top:1566px;width:344px;height:44px;background:#323233;border:1px solid #535355;border-radius:11px;"></div>
<svg style="left:2420px;top:1575px;" width="26" height="26" viewBox="0 0 26 26"><circle cx="13" cy="13" r="11.6" fill="none" stroke="#e8e6e8" stroke-width="2.2"/><path d="M7 9.3 H19 M9 13.5 H17 M11.3 17.5 H14.7" stroke="#e8e6e8" stroke-width="2.1" stroke-linecap="round"/></svg>
<div class="t" style="left:2454px;top:1572.0px;font-size:24px;line-height:33px;color:#77757a;letter-spacing:-0.22px;">Filter</div>
<svg style="left:2787px;top:1573px;" width="24" height="30" viewBox="0 0 24 30"><g fill="none" stroke="#a9a6aa" stroke-width="1.8" stroke-linecap="round" stroke-linejoin="round"><path d="M2 6.5 H22"/><path d="M8 6.5 V3.5 Q8 2 9.5 2 H14.5 Q16 2 16 3.5 V6.5"/><path d="M4 6.5 L5.2 26 Q5.4 28 7.4 28 H16.6 Q18.6 28 18.8 26 L20 6.5"/><path d="M8.5 11 L9 23.5 M12 11 V23.5 M15.5 11 L15 23.5" stroke-width="1.5"/></g></svg>
<div style="left:2826px;top:1572px;width:2px;height:32px;background:#555256;"></div>
<svg style="left:2839px;top:1574px;" width="30" height="28" viewBox="0 0 30 28"><rect x="1.5" y="1.5" width="24" height="24" rx="4" fill="none" stroke="#2f7cf6" stroke-width="2.2"/><path d="M9.5 1.5 V25.5" stroke="#2f7cf6" stroke-width="2.2"/></svg>
<svg style="left:2876px;top:1574px;" width="30" height="28" viewBox="0 0 30 28"><rect x="1.5" y="1.5" width="24" height="24" rx="4" fill="none" stroke="#2f7cf6" stroke-width="2.2"/><path d="M17.5 1.5 V25.5" stroke="#2f7cf6" stroke-width="2.2"/></svg></div></div><div id="rim"></div></body></html>
